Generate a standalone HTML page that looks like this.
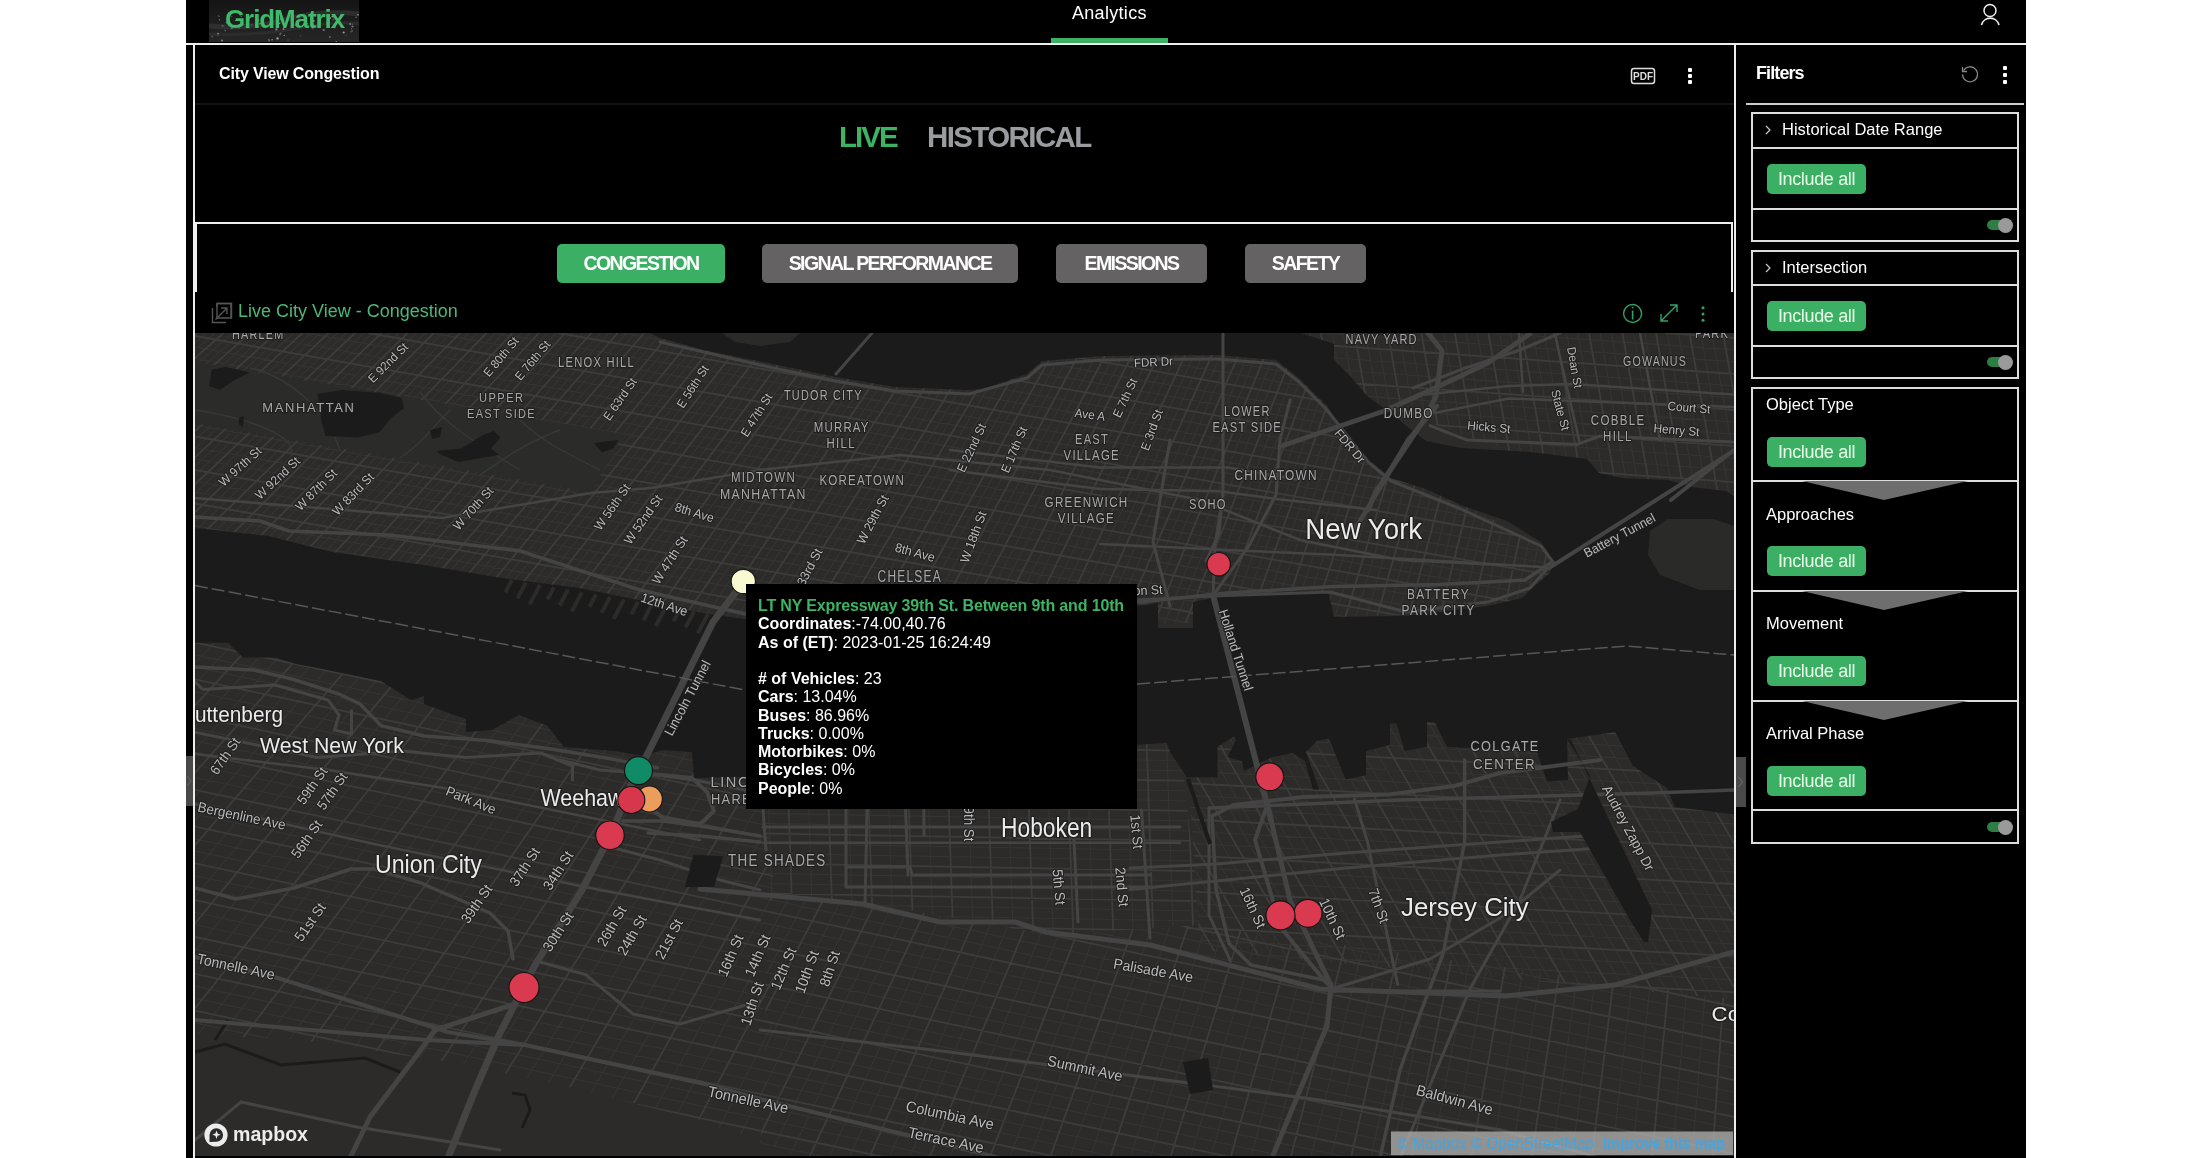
<!DOCTYPE html>
<html><head><meta charset="utf-8">
<style>
*{margin:0;padding:0;box-sizing:border-box}
html,body{width:2212px;height:1158px;overflow:hidden;background:#fff;font-family:"Liberation Sans",sans-serif}
body>*{will-change:transform}
.a{position:absolute}
#app{position:absolute;left:186px;top:0;width:1840px;height:1158px;background:#000;overflow:hidden}
.t{position:absolute;white-space:nowrap;line-height:1}
.btn{position:absolute;top:244px;height:39px;border-radius:5px;background:#646262;color:#fff;font-weight:bold;font-size:19.5px;letter-spacing:-1.6px;display:flex;align-items:center;justify-content:center}
.box{position:absolute;left:1751px;width:268px;border:2px solid #ddd}
.inc{position:absolute;left:1767px;width:99px;height:30px;background:#3bb065;border-radius:5px;color:#e9ffe9;font-size:18px;letter-spacing:-0.35px;display:flex;align-items:center;justify-content:center}
.hl{position:absolute;left:1751px;width:268px;height:2px;background:#ddd}
.tog{position:absolute;left:1987px;width:24px;height:10px;border-radius:5px;background:#2e7d45}
.knob{position:absolute;width:15px;height:15px;border-radius:50%;background:#9a9a9a}
</style></head><body>
<div id="app"></div>
<!-- header -->
<svg class="a" style="left:209px;top:0" width="150" height="42" viewBox="0 0 150 42"><defs><linearGradient id="lg" x1="0" y1="0" x2="0" y2="1"><stop offset="0" stop-color="#141414"/><stop offset="0.5" stop-color="#1e1e1e"/><stop offset="1" stop-color="#262626"/></linearGradient></defs><rect width="150" height="42" fill="url(#lg)"/><path d="M0 26 Q40 30 75 20 T150 14" stroke="#3a3a3a" stroke-width="5" fill="none" opacity="0.6"/><path d="M0 34 Q50 36 90 28 T150 24" stroke="#333" stroke-width="3" fill="none" opacity="0.6"/><circle cx="48.6" cy="18.2" r="0.9" fill="#555"/><circle cx="123.2" cy="16.6" r="0.9" fill="#999"/><circle cx="32.2" cy="16.4" r="0.7" fill="#666"/><circle cx="13.6" cy="25.9" r="1.1" fill="#555"/><circle cx="142.1" cy="31.7" r="0.9" fill="#555"/><circle cx="86.6" cy="25.1" r="1.2" fill="#555"/><circle cx="83.5" cy="17.7" r="0.7" fill="#999"/><circle cx="17.7" cy="22.6" r="1.1" fill="#666"/><circle cx="15.5" cy="30.0" r="0.6" fill="#555"/><circle cx="82.2" cy="15.8" r="0.4" fill="#666"/><circle cx="74.5" cy="28.9" r="1.0" fill="#888"/><circle cx="87.8" cy="26.7" r="0.6" fill="#666"/><circle cx="104.8" cy="20.8" r="0.9" fill="#999"/><circle cx="74.3" cy="23.6" r="0.8" fill="#999"/><circle cx="147.0" cy="17.3" r="0.7" fill="#777"/><circle cx="22.8" cy="27.7" r="0.4" fill="#555"/><circle cx="114.7" cy="30.0" r="1.1" fill="#777"/><circle cx="51.0" cy="23.8" r="0.8" fill="#888"/><circle cx="10.3" cy="16.6" r="0.6" fill="#555"/><circle cx="9.1" cy="33.6" r="0.9" fill="#888"/><circle cx="42.7" cy="24.8" r="0.9" fill="#555"/><circle cx="141.1" cy="24.0" r="0.9" fill="#888"/><circle cx="8.8" cy="35.5" r="0.5" fill="#666"/><circle cx="59.7" cy="39.7" r="0.8" fill="#666"/><circle cx="67.4" cy="29.4" r="1.1" fill="#888"/><circle cx="129.6" cy="21.8" r="0.7" fill="#777"/><circle cx="102.4" cy="24.7" r="0.6" fill="#555"/><circle cx="26.4" cy="20.5" r="0.6" fill="#888"/><circle cx="124.7" cy="19.1" r="0.6" fill="#666"/><circle cx="62.8" cy="24.3" r="0.9" fill="#666"/><circle cx="103.6" cy="28.4" r="0.9" fill="#555"/><circle cx="68.5" cy="38.4" r="1.2" fill="#999"/><circle cx="58.9" cy="25.2" r="0.5" fill="#888"/><circle cx="9.3" cy="15.9" r="0.6" fill="#666"/><circle cx="16.5" cy="30.8" r="0.5" fill="#999"/><circle cx="22.7" cy="16.8" r="0.7" fill="#555"/><circle cx="10.5" cy="19.8" r="0.7" fill="#777"/><circle cx="143.3" cy="30.9" r="0.8" fill="#555"/><circle cx="127.3" cy="41.8" r="0.8" fill="#888"/><circle cx="46.8" cy="18.0" r="1.0" fill="#777"/><circle cx="71.8" cy="33.4" r="0.8" fill="#666"/><circle cx="142.6" cy="28.8" r="0.5" fill="#999"/><circle cx="137.1" cy="35.2" r="0.6" fill="#555"/><circle cx="104.4" cy="21.3" r="0.7" fill="#666"/><circle cx="53.4" cy="20.2" r="0.8" fill="#999"/><circle cx="49.4" cy="20.2" r="1.0" fill="#666"/><circle cx="120.9" cy="36.9" r="1.0" fill="#666"/><circle cx="30.0" cy="27.8" r="1.0" fill="#555"/><circle cx="118.5" cy="27.2" r="0.6" fill="#999"/><circle cx="143.5" cy="26.5" r="1.1" fill="#777"/><circle cx="143.3" cy="24.2" r="0.6" fill="#666"/><circle cx="70.5" cy="23.5" r="0.8" fill="#999"/><circle cx="126.1" cy="27.4" r="0.9" fill="#555"/><circle cx="125.2" cy="17.4" r="0.7" fill="#666"/><circle cx="71.7" cy="19.0" r="1.0" fill="#777"/><circle cx="13.0" cy="40.5" r="1.0" fill="#888"/><circle cx="60.2" cy="40.5" r="1.0" fill="#666"/><circle cx="149.0" cy="14.8" r="0.9" fill="#888"/><circle cx="121.0" cy="18.1" r="1.1" fill="#888"/><circle cx="98.6" cy="23.8" r="0.8" fill="#666"/><circle cx="3.2" cy="36.4" r="1.0" fill="#555"/><circle cx="79.0" cy="40.1" r="0.7" fill="#666"/><circle cx="123.9" cy="19.9" r="0.6" fill="#777"/><circle cx="75.2" cy="35.4" r="0.7" fill="#999"/><circle cx="62.9" cy="17.7" r="1.1" fill="#777"/><circle cx="134.7" cy="32.5" r="1.1" fill="#999"/><circle cx="63.1" cy="39.7" r="0.8" fill="#999"/><circle cx="22.8" cy="28.3" r="1.1" fill="#666"/><circle cx="91.3" cy="35.7" r="0.5" fill="#666"/><circle cx="71.0" cy="34.3" r="0.8" fill="#777"/></svg>
<div class="t" style="left:225px;top:5.5px;font-size:26px;color:#3dba6a;font-weight:bold;letter-spacing:-1.1px">GridMatrix</div>
<div class="t" style="left:1072px;top:4px;font-size:18px;color:#fff;letter-spacing:0.3px">Analytics</div>
<div class="a" style="left:1051px;top:38px;width:117px;height:5px;background:#3cb064"></div>
<div class="a" style="left:186px;top:43px;width:1840px;height:2px;background:#eee"></div>
<svg class="a" style="left:1978px;top:2px" width="26" height="26" viewBox="0 0 26 26"><circle cx="12" cy="8.5" r="6" fill="none" stroke="#eee" stroke-width="1.5"/><path d="M3.5 23 A9 9 0 0 1 21 23" fill="none" stroke="#eee" stroke-width="1.6"/></svg>

<!-- main panel borders -->
<div class="a" style="left:193px;top:44px;width:2px;height:1114px;background:#eee"></div>
<div class="a" style="left:1734px;top:44px;width:2px;height:1114px;background:#eee"></div>
<div class="t" style="left:219px;top:66px;font-size:16px;color:#fff;font-weight:bold;letter-spacing:-0.15px">City View Congestion</div>
<svg class="a" style="left:1630px;top:67px" width="27" height="18" viewBox="0 0 27 18"><rect x="1.5" y="1.5" width="23" height="15" rx="2.5" fill="none" stroke="#ddd" stroke-width="1.5"/><text x="13" y="13.3" font-family="Liberation Sans" font-size="10" font-weight="bold" fill="#ddd" text-anchor="middle">PDF</text></svg>
<div class="a" style="left:1688px;top:68px;width:4px;height:4px;background:#fff;border-radius:1px"></div>
<div class="a" style="left:1688px;top:74px;width:4px;height:4px;background:#fff;border-radius:1px"></div>
<div class="a" style="left:1688px;top:80px;width:4px;height:4px;background:#fff;border-radius:1px"></div>
<div class="a" style="left:195px;top:103px;width:1539px;height:2px;background:#121212"></div>
<div class="t" style="left:839px;top:122px;font-size:29.5px;color:#3cb464;font-weight:bold;letter-spacing:-2px">LIVE</div>
<div class="t" style="left:927px;top:122px;font-size:29.5px;color:#9a9ca0;font-weight:bold;letter-spacing:-1.6px">HISTORICAL</div>
<div class="a" style="left:195px;top:222px;width:1538px;height:2px;background:#eee"></div>
<div class="a" style="left:195px;top:222px;width:2px;height:70px;background:#eee"></div>
<div class="a" style="left:1731px;top:222px;width:2px;height:70px;background:#eee"></div>

<div class="btn" style="left:557px;width:168px;background:#3bb065">CONGESTION</div>
<div class="btn" style="left:762px;width:256px">SIGNAL PERFORMANCE</div>
<div class="btn" style="left:1056px;width:151px">EMISSIONS</div>
<div class="btn" style="left:1245px;width:121px">SAFETY</div>

<svg class="a" style="left:211px;top:302px" width="22" height="22" viewBox="0 0 22 22"><path d="M6 1.5 H20 V15 M6 1.5 V5" fill="none" stroke="#555" stroke-width="1.4"/><path d="M1.5 6 V20.5 H15" fill="none" stroke="#555" stroke-width="1.4"/><path d="M6 1.5 H20.5 V16 H6 Z" fill="none" stroke="#555" stroke-width="1.4"/><path d="M4.5 17.5 L16 6 M10 6 H16 V12" fill="none" stroke="#555" stroke-width="1.4"/></svg>
<div class="t" style="left:238px;top:302px;font-size:18px;color:#4cb87a">Live City View - Congestion</div>

<svg class="a" style="left:1615px;top:296px" width="100" height="36" viewBox="1615 296 100 36">
<circle cx="1632.6" cy="313.5" r="9" fill="none" stroke="#34a266" stroke-width="1.4"/>
<path d="M1632.6 310.5 V319.5" stroke="#34a266" stroke-width="1.6"/><circle cx="1632.6" cy="307.6" r="0.9" fill="#34a266"/>
<path d="M1661 321 L1677 305 M1670 305 H1677 V312 M1661 314 V321 H1668" stroke="#34a266" stroke-width="1.4" fill="none"/>
<circle cx="1703" cy="307.8" r="1.5" fill="#34a266"/><circle cx="1703" cy="314" r="1.5" fill="#34a266"/><circle cx="1703" cy="320.3" r="1.5" fill="#34a266"/>
</svg>
<!-- MAP -->
<svg class="a" style="left:195px;top:333px;will-change:transform" width="1539" height="825" viewBox="195 333 1539 825"><defs><clipPath id="c_manh"><path d="M195,333 L1292,333 L1340,427 L1560,560 L1520,610 L1137,625 L745,625 L195,600 Z"/></clipPath><clipPath id="c_bk"><path d="M1292,333 L1740,333 L1740,520 L1560,470 L1340,390 Z"/></clipPath><clipPath id="c_njw"><path d="M195,600 L745,630 L760,760 L780,940 L760,1158 L195,1158 Z"/></clipPath><clipPath id="c_hob"><path d="M745,630 L1180,740 L1200,925 L1050,935 L880,905 L770,895 Z"/></clipPath><clipPath id="c_jc"><path d="M1180,650 L1740,650 L1740,1000 L1200,950 Z"/></clipPath><clipPath id="c_njs"><path d="M770,895 L880,905 L1050,935 L1200,925 L1740,1000 L1740,1158 L760,1158 Z"/></clipPath></defs><rect x="195" y="333" width="1539" height="825" fill="#2c2b2a"/>
<g clip-path="url(#c_manh)"><path d="M1635.2,333.0L1734.0,350.4M1571.8,333.0L1734.0,361.6M1445.1,333.0L1734.0,383.9M1381.8,333.0L1734.0,395.1M1255.1,333.0L1734.0,417.4M1191.7,333.0L1734.0,428.6M1065.0,333.0L1734.0,451.0M1001.7,333.0L1734.0,462.1M875.0,333.0L1734.0,484.5M811.6,333.0L1734.0,495.6M685.0,333.0L1734.0,518.0M621.6,333.0L1734.0,529.1M494.9,333.0L1734.0,551.5M431.6,333.0L1734.0,562.7M304.9,333.0L1734.0,585.0M241.5,333.0L1734.0,596.2M195.0,347.1L1734.0,618.5M195.0,358.3L1734.0,629.7M195.0,380.6L1734.0,652.0M195.0,391.8L1734.0,663.2M195.0,414.2L1734.0,685.5M195.0,425.3L1734.0,696.7M195.0,447.7L1734.0,719.0M195.0,458.8L1734.0,730.2M195.0,481.2L1734.0,752.5M195.0,492.3L1734.0,763.7M195.0,514.7L1734.0,786.0M195.0,525.9L1734.0,797.2M195.0,548.2L1734.0,819.6M195.0,559.4L1734.0,830.7M195.0,581.7L1734.0,853.1M195.0,592.9L1734.0,864.2M195.0,615.2L1734.0,886.6M195.0,626.4L1734.0,897.7M195.0,648.7L1734.0,920.1M195.0,659.9L1734.0,931.3M195.0,682.2L1734.0,953.6M195.0,693.4L1734.0,964.8M195.0,715.7L1734.0,987.1M195.0,726.9L1734.0,998.3M195.0,749.2L1734.0,1020.6M195.0,760.4L1734.0,1031.8M195.0,782.8L1734.0,1054.1M195.0,793.9L1734.0,1065.3M195.0,816.3L1734.0,1087.6M195.0,827.4L1734.0,1098.8M195.0,849.8L1734.0,1121.1M195.0,860.9L1734.0,1132.3M195.0,883.3L1734.0,1154.6M195.0,894.5L1689.7,1158.0M195.0,916.8L1563.0,1158.0M195.0,928.0L1499.6,1158.0M195.0,950.3L1372.9,1158.0M195.0,961.5L1309.6,1158.0M195.0,983.8L1182.9,1158.0M195.0,995.0L1119.5,1158.0M195.0,1017.3L992.9,1158.0M195.0,1028.5L929.5,1158.0M195.0,1050.8L802.8,1158.0M195.0,1062.0L739.5,1158.0M195.0,1084.3L612.8,1158.0M195.0,1095.5L549.4,1158.0M195.0,1117.8L422.7,1158.0M195.0,1129.0L359.4,1158.0M195.0,1151.4L232.7,1158.0M206.2,333.0L195.0,342.6M214.9,333.0L195.0,350.2M232.4,333.0L195.0,365.8M241.2,333.0L195.0,373.6M258.7,333.0L195.0,389.6M267.5,333.0L195.0,397.8M285.0,333.0L195.0,414.3M293.7,333.0L195.0,422.7M311.2,333.0L195.0,439.8M320.0,333.0L195.0,448.5M337.5,333.0L195.0,466.2M346.3,333.0L195.0,475.2M363.8,333.0L195.0,493.6M372.5,333.0L195.0,502.9M390.0,333.0L195.0,521.8M398.8,333.0L195.0,531.5M416.3,333.0L195.0,551.2M425.1,333.0L195.0,561.2M442.6,333.0L195.0,581.5M451.3,333.0L195.0,591.9M468.8,333.0L195.0,613.1M477.6,333.0L195.0,623.8M495.1,333.0L195.0,645.8M503.9,333.0L195.0,657.0M521.4,333.0L195.0,679.8M530.1,333.0L195.0,691.4M547.6,333.0L195.0,715.2M556.4,333.0L195.0,727.3M573.9,333.0L195.0,752.0M582.7,333.0L195.0,764.6M600.2,333.0L195.0,790.3M608.9,333.0L195.0,803.4M626.4,333.0L195.0,830.2M635.2,333.0L195.0,843.9M652.7,333.0L195.0,871.9M661.5,333.0L195.0,886.2M679.0,333.0L195.0,915.4M687.7,333.0L195.0,930.3M705.3,333.0L195.0,960.9M714.0,333.0L195.0,976.5M731.5,333.0L195.0,1008.4M740.3,333.0L195.0,1024.8M757.8,333.0L195.0,1058.3M766.5,333.0L195.0,1075.4M784.1,333.0L195.0,1110.5M792.8,333.0L195.0,1128.5M810.3,333.0L200.4,1158.0M819.1,333.0L214.2,1158.0M836.6,333.0L241.8,1158.0M845.3,333.0L255.6,1158.0M862.9,333.0L283.2,1158.0M871.6,333.0L297.0,1158.0M889.1,333.0L324.6,1158.0M897.9,333.0L338.4,1158.0M915.4,333.0L366.0,1158.0M924.2,333.0L379.8,1158.0M941.7,333.0L407.4,1158.0M950.4,333.0L421.2,1158.0M967.9,333.0L448.8,1158.0M976.7,333.0L462.6,1158.0M994.2,333.0L490.2,1158.0M1003.0,333.0L504.0,1158.0M1020.5,333.0L531.6,1158.0M1029.2,333.0L545.4,1158.0M1046.7,333.0L573.0,1158.0M1055.5,333.0L586.8,1158.0M1073.0,333.0L614.4,1158.0M1081.8,333.0L628.2,1158.0M1099.3,333.0L655.8,1158.0M1108.0,333.0L669.6,1158.0M1125.5,333.0L697.2,1158.0M1134.3,333.0L711.0,1158.0M1151.8,333.0L738.6,1158.0M1160.6,333.0L752.4,1158.0M1178.1,333.0L780.0,1158.0M1186.8,333.0L793.8,1158.0M1204.3,333.0L821.4,1158.0M1213.1,333.0L835.2,1158.0M1230.6,333.0L862.8,1158.0M1239.4,333.0L876.6,1158.0M1256.9,333.0L904.2,1158.0M1265.6,333.0L918.0,1158.0M1283.1,333.0L945.6,1158.0M1291.9,333.0L959.4,1158.0M1309.4,333.0L987.0,1158.0M1318.2,333.0L1000.8,1158.0M1335.7,333.0L1028.4,1158.0M1344.4,333.0L1042.2,1158.0M1361.9,333.0L1069.8,1158.0M1370.7,333.0L1083.6,1158.0M1388.2,333.0L1111.2,1158.0M1397.0,333.0L1125.0,1158.0M1414.5,333.0L1152.6,1158.0M1423.2,333.0L1166.4,1158.0M1440.8,333.0L1194.0,1158.0M1449.5,333.0L1207.8,1158.0M1467.0,333.0L1235.4,1158.0M1475.8,333.0L1249.2,1158.0M1493.3,333.0L1276.8,1158.0M1502.0,333.0L1290.6,1158.0M1519.6,333.0L1318.2,1158.0M1528.3,333.0L1332.0,1158.0M1545.8,333.0L1359.6,1158.0M1554.6,333.0L1373.4,1158.0M1572.1,333.0L1401.0,1158.0M1580.8,333.0L1414.8,1158.0M1598.4,333.0L1442.4,1158.0M1607.1,333.0L1456.2,1158.0M1624.6,333.0L1483.8,1158.0M1633.4,333.0L1497.6,1158.0M1650.9,333.0L1525.2,1158.0M1659.7,333.0L1539.0,1158.0M1677.2,333.0L1566.6,1158.0M1685.9,333.0L1580.4,1158.0M1703.4,333.0L1608.0,1158.0M1712.2,333.0L1621.8,1158.0M1729.7,333.0L1649.4,1158.0M1734.0,381.9L1663.2,1158.0M1734.0,611.3L1690.8,1158.0M1734.0,754.9L1704.6,1158.0M1734.0,1129.1L1732.3,1158.0" stroke="#353433" stroke-width="1.1" fill="none"/><path d="M1698.5,333.0L1734.0,339.3M1508.5,333.0L1734.0,372.8M1318.4,333.0L1734.0,406.3M1128.4,333.0L1734.0,439.8M938.3,333.0L1734.0,473.3M748.3,333.0L1734.0,506.8M558.3,333.0L1734.0,540.3M368.2,333.0L1734.0,573.8M195.0,336.0L1734.0,607.3M195.0,369.5L1734.0,640.8M195.0,403.0L1734.0,674.4M195.0,436.5L1734.0,707.9M195.0,470.0L1734.0,741.4M195.0,503.5L1734.0,774.9M195.0,537.0L1734.0,808.4M195.0,570.5L1734.0,841.9M195.0,604.0L1734.0,875.4M195.0,637.5L1734.0,908.9M195.0,671.1L1734.0,942.4M195.0,704.6L1734.0,975.9M195.0,738.1L1734.0,1009.4M195.0,771.6L1734.0,1043.0M195.0,805.1L1734.0,1076.5M195.0,838.6L1734.0,1110.0M195.0,872.1L1734.0,1143.5M195.0,905.6L1626.3,1158.0M195.0,939.1L1436.3,1158.0M195.0,972.6L1246.2,1158.0M195.0,1006.1L1056.2,1158.0M195.0,1039.7L866.2,1158.0M195.0,1073.2L676.1,1158.0M195.0,1106.7L486.1,1158.0M195.0,1140.2L296.0,1158.0M197.4,333.0L195.0,335.1M223.7,333.0L195.0,358.0M249.9,333.0L195.0,381.6M276.2,333.0L195.0,406.0M302.5,333.0L195.0,431.2M328.7,333.0L195.0,457.3M355.0,333.0L195.0,484.3M381.3,333.0L195.0,512.3M407.5,333.0L195.0,541.3M433.8,333.0L195.0,571.3M460.1,333.0L195.0,602.4M486.4,333.0L195.0,634.8M512.6,333.0L195.0,668.3M538.9,333.0L195.0,703.2M565.2,333.0L195.0,739.5M591.4,333.0L195.0,777.3M617.7,333.0L195.0,816.7M644.0,333.0L195.0,857.8M670.2,333.0L195.0,900.7M696.5,333.0L195.0,945.5M722.8,333.0L195.0,992.3M749.0,333.0L195.0,1041.4M775.3,333.0L195.0,1092.8M801.6,333.0L195.0,1146.7M827.8,333.0L228.0,1158.0M854.1,333.0L269.4,1158.0M880.4,333.0L310.8,1158.0M906.6,333.0L352.2,1158.0M932.9,333.0L393.6,1158.0M959.2,333.0L435.0,1158.0M985.4,333.0L476.4,1158.0M1011.7,333.0L517.8,1158.0M1038.0,333.0L559.2,1158.0M1064.2,333.0L600.6,1158.0M1090.5,333.0L642.0,1158.0M1116.8,333.0L683.4,1158.0M1143.1,333.0L724.8,1158.0M1169.3,333.0L766.2,1158.0M1195.6,333.0L807.6,1158.0M1221.9,333.0L849.0,1158.0M1248.1,333.0L890.4,1158.0M1274.4,333.0L931.8,1158.0M1300.7,333.0L973.2,1158.0M1326.9,333.0L1014.6,1158.0M1353.2,333.0L1056.0,1158.0M1379.5,333.0L1097.4,1158.0M1405.7,333.0L1138.8,1158.0M1432.0,333.0L1180.2,1158.0M1458.3,333.0L1221.6,1158.0M1484.5,333.0L1263.0,1158.0M1510.8,333.0L1304.4,1158.0M1537.1,333.0L1345.8,1158.0M1563.3,333.0L1387.2,1158.0M1589.6,333.0L1428.6,1158.0M1615.9,333.0L1470.0,1158.0M1642.1,333.0L1511.4,1158.0M1668.4,333.0L1552.8,1158.0M1694.7,333.0L1594.2,1158.0M1720.9,333.0L1635.6,1158.0M1734.0,488.4L1677.0,1158.0M1734.0,924.9L1718.4,1158.0" stroke="#3c3c3b" stroke-width="1.8" fill="none"/></g>
<g clip-path="url(#c_bk)"><path d="M1493.6,333.0L1734.0,349.8M1321.6,333.0L1734.0,361.8M977.5,333.0L1734.0,385.9M805.5,333.0L1734.0,397.9M461.4,333.0L1734.0,422.0M289.4,333.0L1734.0,434.0M195.0,350.5L1734.0,458.1M195.0,362.5L1734.0,470.1M195.0,386.5L1734.0,494.2M195.0,398.6L1734.0,506.2M195.0,422.6L1734.0,530.2M195.0,434.7L1734.0,542.3M195.0,458.7L1734.0,566.3M195.0,470.7L1734.0,578.4M195.0,494.8L1734.0,602.4M195.0,506.8L1734.0,614.5M195.0,530.9L1734.0,638.5M195.0,542.9L1734.0,650.5M195.0,567.0L1734.0,674.6M195.0,579.0L1734.0,686.6M195.0,603.1L1734.0,710.7M195.0,615.1L1734.0,722.7M195.0,639.2L1734.0,746.8M195.0,651.2L1734.0,758.8M195.0,675.2L1734.0,782.9M195.0,687.3L1734.0,794.9M195.0,711.3L1734.0,819.0M195.0,723.4L1734.0,831.0M195.0,747.4L1734.0,855.0M195.0,759.5L1734.0,867.1M195.0,783.5L1734.0,891.1M195.0,795.5L1734.0,903.2M195.0,819.6L1734.0,927.2M195.0,831.6L1734.0,939.2M195.0,855.7L1734.0,963.3M195.0,867.7L1734.0,975.3M195.0,891.8L1734.0,999.4M195.0,903.8L1734.0,1011.4M195.0,927.9L1734.0,1035.5M195.0,939.9L1734.0,1047.5M195.0,964.0L1734.0,1071.6M195.0,976.0L1734.0,1083.6M195.0,1000.0L1734.0,1107.7M195.0,1012.1L1734.0,1119.7M195.0,1036.1L1734.0,1143.7M195.0,1048.2L1734.0,1155.8M195.0,1072.2L1421.8,1158.0M195.0,1084.2L1249.8,1158.0M195.0,1108.3L905.7,1158.0M195.0,1120.3L733.7,1158.0M195.0,1144.4L389.6,1158.0M195.0,1156.4L217.6,1158.0M1711.8,333.0L1734.0,458.7M1700.7,333.0L1734.0,522.1M1678.3,333.0L1734.0,648.8M1667.2,333.0L1734.0,712.1M1644.8,333.0L1734.0,838.8M1633.6,333.0L1734.0,902.1M1611.3,333.0L1734.0,1028.8M1600.1,333.0L1734.0,1092.2M1577.8,333.0L1723.3,1158.0M1566.6,333.0L1712.1,1158.0M1544.3,333.0L1689.8,1158.0M1533.1,333.0L1678.6,1158.0M1510.8,333.0L1656.2,1158.0M1499.6,333.0L1645.1,1158.0M1477.3,333.0L1622.7,1158.0M1466.1,333.0L1611.6,1158.0M1443.8,333.0L1589.2,1158.0M1432.6,333.0L1578.1,1158.0M1410.2,333.0L1555.7,1158.0M1399.1,333.0L1544.5,1158.0M1376.7,333.0L1522.2,1158.0M1365.6,333.0L1511.0,1158.0M1343.2,333.0L1488.7,1158.0M1332.1,333.0L1477.5,1158.0M1309.7,333.0L1455.2,1158.0M1298.6,333.0L1444.0,1158.0M1276.2,333.0L1421.7,1158.0M1265.0,333.0L1410.5,1158.0M1242.7,333.0L1388.2,1158.0M1231.5,333.0L1377.0,1158.0M1209.2,333.0L1354.7,1158.0M1198.0,333.0L1343.5,1158.0M1175.7,333.0L1321.2,1158.0M1164.5,333.0L1310.0,1158.0M1142.2,333.0L1287.6,1158.0M1131.0,333.0L1276.5,1158.0M1108.7,333.0L1254.1,1158.0M1097.5,333.0L1243.0,1158.0M1075.2,333.0L1220.6,1158.0M1064.0,333.0L1209.5,1158.0M1041.6,333.0L1187.1,1158.0M1030.5,333.0L1175.9,1158.0M1008.1,333.0L1153.6,1158.0M997.0,333.0L1142.4,1158.0M974.6,333.0L1120.1,1158.0M963.5,333.0L1108.9,1158.0M941.1,333.0L1086.6,1158.0M930.0,333.0L1075.4,1158.0M907.6,333.0L1053.1,1158.0M896.4,333.0L1041.9,1158.0M874.1,333.0L1019.6,1158.0M862.9,333.0L1008.4,1158.0M840.6,333.0L986.1,1158.0M829.4,333.0L974.9,1158.0M807.1,333.0L952.6,1158.0M795.9,333.0L941.4,1158.0M773.6,333.0L919.0,1158.0M762.4,333.0L907.9,1158.0M740.1,333.0L885.5,1158.0M728.9,333.0L874.4,1158.0M706.6,333.0L852.0,1158.0M695.4,333.0L840.9,1158.0M673.0,333.0L818.5,1158.0M661.9,333.0L807.4,1158.0M639.5,333.0L785.0,1158.0M628.4,333.0L773.8,1158.0M606.0,333.0L751.5,1158.0M594.9,333.0L740.3,1158.0M572.5,333.0L718.0,1158.0M561.4,333.0L706.8,1158.0M539.0,333.0L684.5,1158.0M527.8,333.0L673.3,1158.0M505.5,333.0L651.0,1158.0M494.3,333.0L639.8,1158.0M472.0,333.0L617.5,1158.0M460.8,333.0L606.3,1158.0M438.5,333.0L584.0,1158.0M427.3,333.0L572.8,1158.0M405.0,333.0L550.4,1158.0M393.8,333.0L539.3,1158.0M371.5,333.0L516.9,1158.0M360.3,333.0L505.8,1158.0M338.0,333.0L483.4,1158.0M326.8,333.0L472.3,1158.0M304.5,333.0L449.9,1158.0M293.3,333.0L438.8,1158.0M270.9,333.0L416.4,1158.0M259.8,333.0L405.2,1158.0M237.4,333.0L382.9,1158.0M226.3,333.0L371.7,1158.0M203.9,333.0L349.4,1158.0M195.0,345.7L338.2,1158.0M195.0,472.4L315.9,1158.0M195.0,535.8L304.7,1158.0M195.0,662.5L282.4,1158.0M195.0,725.8L271.2,1158.0M195.0,852.5L248.9,1158.0M195.0,915.9L237.7,1158.0M195.0,1042.6L215.4,1158.0M195.0,1105.9L204.2,1158.0" stroke="#353433" stroke-width="1.1" fill="none"/><path d="M1665.6,333.0L1734.0,337.8M1149.6,333.0L1734.0,373.9M633.5,333.0L1734.0,410.0M195.0,338.4L1734.0,446.0M195.0,374.5L1734.0,482.1M195.0,410.6L1734.0,518.2M195.0,446.7L1734.0,554.3M195.0,482.8L1734.0,590.4M195.0,518.9L1734.0,626.5M195.0,555.0L1734.0,662.6M195.0,591.0L1734.0,698.7M195.0,627.1L1734.0,734.7M195.0,663.2L1734.0,770.8M195.0,699.3L1734.0,806.9M195.0,735.4L1734.0,843.0M195.0,771.5L1734.0,879.1M195.0,807.6L1734.0,915.2M195.0,843.7L1734.0,951.3M195.0,879.7L1734.0,987.4M195.0,915.8L1734.0,1023.5M195.0,951.9L1734.0,1059.5M195.0,988.0L1734.0,1095.6M195.0,1024.1L1734.0,1131.7M195.0,1060.2L1593.8,1158.0M195.0,1096.3L1077.7,1158.0M195.0,1132.4L561.7,1158.0M1723.0,333.0L1734.0,395.4M1689.5,333.0L1734.0,585.4M1656.0,333.0L1734.0,775.5M1622.5,333.0L1734.0,965.5M1589.0,333.0L1734.0,1155.5M1555.5,333.0L1700.9,1158.0M1521.9,333.0L1667.4,1158.0M1488.4,333.0L1633.9,1158.0M1454.9,333.0L1600.4,1158.0M1421.4,333.0L1566.9,1158.0M1387.9,333.0L1533.4,1158.0M1354.4,333.0L1499.9,1158.0M1320.9,333.0L1466.4,1158.0M1287.4,333.0L1432.9,1158.0M1253.9,333.0L1399.3,1158.0M1220.4,333.0L1365.8,1158.0M1186.9,333.0L1332.3,1158.0M1153.3,333.0L1298.8,1158.0M1119.8,333.0L1265.3,1158.0M1086.3,333.0L1231.8,1158.0M1052.8,333.0L1198.3,1158.0M1019.3,333.0L1164.8,1158.0M985.8,333.0L1131.3,1158.0M952.3,333.0L1097.8,1158.0M918.8,333.0L1064.3,1158.0M885.3,333.0L1030.7,1158.0M851.8,333.0L997.2,1158.0M818.3,333.0L963.7,1158.0M784.7,333.0L930.2,1158.0M751.2,333.0L896.7,1158.0M717.7,333.0L863.2,1158.0M684.2,333.0L829.7,1158.0M650.7,333.0L796.2,1158.0M617.2,333.0L762.7,1158.0M583.7,333.0L729.2,1158.0M550.2,333.0L695.7,1158.0M516.7,333.0L662.1,1158.0M483.2,333.0L628.6,1158.0M449.7,333.0L595.1,1158.0M416.1,333.0L561.6,1158.0M382.6,333.0L528.1,1158.0M349.1,333.0L494.6,1158.0M315.6,333.0L461.1,1158.0M282.1,333.0L427.6,1158.0M248.6,333.0L394.1,1158.0M215.1,333.0L360.6,1158.0M195.0,409.1L327.1,1158.0M195.0,599.1L293.5,1158.0M195.0,789.2L260.0,1158.0M195.0,979.2L226.5,1158.0" stroke="#3c3c3b" stroke-width="1.8" fill="none"/></g>
<g clip-path="url(#c_njw)"><path d="M1624.4,333.0L1734.0,356.3M1566.6,333.0L1734.0,368.6M1451.2,333.0L1734.0,393.1M1393.5,333.0L1734.0,405.4M1278.1,333.0L1734.0,429.9M1220.3,333.0L1734.0,442.2M1104.9,333.0L1734.0,466.7M1047.2,333.0L1734.0,479.0M931.8,333.0L1734.0,503.5M874.0,333.0L1734.0,515.8M758.6,333.0L1734.0,540.3M700.9,333.0L1734.0,552.6M585.5,333.0L1734.0,577.1M527.7,333.0L1734.0,589.4M412.3,333.0L1734.0,613.9M354.6,333.0L1734.0,626.2M239.2,333.0L1734.0,650.7M195.0,335.9L1734.0,663.0M195.0,360.4L1734.0,687.5M195.0,372.7L1734.0,699.8M195.0,397.2L1734.0,724.3M195.0,409.5L1734.0,736.6M195.0,434.0L1734.0,761.2M195.0,446.3L1734.0,773.4M195.0,470.8L1734.0,798.0M195.0,483.1L1734.0,810.2M195.0,507.6L1734.0,834.8M195.0,519.9L1734.0,847.0M195.0,544.4L1734.0,871.6M195.0,556.7L1734.0,883.8M195.0,581.2L1734.0,908.4M195.0,593.5L1734.0,920.6M195.0,618.0L1734.0,945.2M195.0,630.3L1734.0,957.4M195.0,654.9L1734.0,982.0M195.0,667.1L1734.0,994.2M195.0,691.7L1734.0,1018.8M195.0,703.9L1734.0,1031.0M195.0,728.5L1734.0,1055.6M195.0,740.7L1734.0,1067.9M195.0,765.3L1734.0,1092.4M195.0,777.5L1734.0,1104.7M195.0,802.1L1734.0,1129.2M195.0,814.3L1734.0,1141.5M195.0,838.9L1696.4,1158.0M195.0,851.1L1638.7,1158.0M195.0,875.7L1523.2,1158.0M195.0,887.9L1465.5,1158.0M195.0,912.5L1350.1,1158.0M195.0,924.8L1292.4,1158.0M195.0,949.3L1176.9,1158.0M195.0,961.6L1119.2,1158.0M195.0,986.1L1003.8,1158.0M195.0,998.4L946.1,1158.0M195.0,1022.9L830.6,1158.0M195.0,1035.2L772.9,1158.0M195.0,1059.7L657.5,1158.0M195.0,1072.0L599.7,1158.0M195.0,1096.5L484.3,1158.0M195.0,1108.8L426.6,1158.0M195.0,1133.3L311.2,1158.0M195.0,1145.6L253.4,1158.0M222.1,333.0L195.0,356.5M238.0,333.0L195.0,370.8M269.8,333.0L195.0,400.0M285.8,333.0L195.0,415.1M317.6,333.0L195.0,446.2M333.5,333.0L195.0,462.2M365.4,333.0L195.0,495.2M381.3,333.0L195.0,512.3M413.1,333.0L195.0,547.5M429.0,333.0L195.0,565.7M460.9,333.0L195.0,603.4M476.8,333.0L195.0,622.9M508.6,333.0L195.0,663.2M524.6,333.0L195.0,684.0M556.4,333.0L195.0,727.3M572.3,333.0L195.0,749.7M604.2,333.0L195.0,796.2M620.1,333.0L195.0,820.4M651.9,333.0L195.0,870.6M667.8,333.0L195.0,896.7M699.7,333.0L195.0,951.1M715.6,333.0L195.0,979.3M747.4,333.0L195.0,1038.3M763.4,333.0L195.0,1069.1M795.2,333.0L195.0,1133.4M811.1,333.0L201.7,1158.0M843.0,333.0L251.8,1158.0M858.9,333.0L276.9,1158.0M890.7,333.0L327.1,1158.0M906.6,333.0L352.2,1158.0M938.5,333.0L402.4,1158.0M954.4,333.0L427.5,1158.0M986.2,333.0L477.7,1158.0M1002.2,333.0L502.8,1158.0M1034.0,333.0L552.9,1158.0M1049.9,333.0L578.0,1158.0M1081.8,333.0L628.2,1158.0M1097.7,333.0L653.3,1158.0M1129.5,333.0L703.5,1158.0M1145.4,333.0L728.6,1158.0M1177.3,333.0L778.8,1158.0M1193.2,333.0L803.9,1158.0M1225.0,333.0L854.0,1158.0M1241.0,333.0L879.1,1158.0M1272.8,333.0L929.3,1158.0M1288.7,333.0L954.4,1158.0M1320.6,333.0L1004.6,1158.0M1336.5,333.0L1029.7,1158.0M1368.3,333.0L1079.9,1158.0M1384.2,333.0L1105.0,1158.0M1416.1,333.0L1155.1,1158.0M1432.0,333.0L1180.2,1158.0M1463.8,333.0L1230.4,1158.0M1479.8,333.0L1255.5,1158.0M1511.6,333.0L1305.7,1158.0M1527.5,333.0L1330.8,1158.0M1559.4,333.0L1381.0,1158.0M1575.3,333.0L1406.1,1158.0M1607.1,333.0L1456.2,1158.0M1623.0,333.0L1481.3,1158.0M1654.9,333.0L1531.5,1158.0M1670.8,333.0L1556.6,1158.0M1702.6,333.0L1606.8,1158.0M1718.6,333.0L1631.9,1158.0M1734.0,531.0L1682.1,1158.0M1734.0,783.7L1707.2,1158.0" stroke="#353433" stroke-width="1.1" fill="none"/><path d="M1682.1,333.0L1734.0,344.0M1508.9,333.0L1734.0,380.8M1335.8,333.0L1734.0,417.6M1162.6,333.0L1734.0,454.4M989.5,333.0L1734.0,491.3M816.3,333.0L1734.0,528.1M643.2,333.0L1734.0,564.9M470.0,333.0L1734.0,601.7M296.9,333.0L1734.0,638.5M195.0,348.2L1734.0,675.3M195.0,385.0L1734.0,712.1M195.0,421.8L1734.0,748.9M195.0,458.6L1734.0,785.7M195.0,495.4L1734.0,822.5M195.0,532.2L1734.0,859.3M195.0,569.0L1734.0,896.1M195.0,605.8L1734.0,932.9M195.0,642.6L1734.0,969.7M195.0,679.4L1734.0,1006.5M195.0,716.2L1734.0,1043.3M195.0,753.0L1734.0,1080.1M195.0,789.8L1734.0,1116.9M195.0,826.6L1734.0,1153.7M195.0,863.4L1580.9,1158.0M195.0,900.2L1407.8,1158.0M195.0,937.0L1234.6,1158.0M195.0,973.8L1061.5,1158.0M195.0,1010.6L888.3,1158.0M195.0,1047.4L715.2,1158.0M195.0,1084.2L542.0,1158.0M195.0,1121.0L368.9,1158.0M195.0,1157.8L195.7,1158.0M206.2,333.0L195.0,342.6M253.9,333.0L195.0,385.2M301.7,333.0L195.0,430.5M349.4,333.0L195.0,478.5M397.2,333.0L195.0,529.7M445.0,333.0L195.0,584.4M492.7,333.0L195.0,642.8M540.5,333.0L195.0,705.4M588.2,333.0L195.0,772.7M636.0,333.0L195.0,845.2M683.8,333.0L195.0,923.5M731.5,333.0L195.0,1008.4M779.3,333.0L195.0,1100.8M827.0,333.0L226.7,1158.0M874.8,333.0L302.0,1158.0M922.6,333.0L377.3,1158.0M970.3,333.0L452.6,1158.0M1018.1,333.0L527.8,1158.0M1065.8,333.0L603.1,1158.0M1113.6,333.0L678.4,1158.0M1161.4,333.0L753.7,1158.0M1209.1,333.0L828.9,1158.0M1256.9,333.0L904.2,1158.0M1304.6,333.0L979.5,1158.0M1352.4,333.0L1054.8,1158.0M1400.2,333.0L1130.0,1158.0M1447.9,333.0L1205.3,1158.0M1495.7,333.0L1280.6,1158.0M1543.4,333.0L1355.9,1158.0M1591.2,333.0L1431.1,1158.0M1639.0,333.0L1506.4,1158.0M1686.7,333.0L1581.7,1158.0M1734.0,338.1L1657.0,1158.0M1734.0,1129.1L1732.3,1158.0" stroke="#3c3c3b" stroke-width="1.8" fill="none"/></g>
<g clip-path="url(#c_hob)"><path d="M742.0,333.0L1734.0,350.3M195.0,333.5L1734.0,360.3M195.0,353.5L1734.0,380.3M195.0,363.5L1734.0,390.3M195.0,383.5L1734.0,410.3M195.0,393.5L1734.0,420.3M195.0,413.5L1734.0,440.3M195.0,423.5L1734.0,450.3M195.0,443.5L1734.0,470.3M195.0,453.5L1734.0,480.3M195.0,473.5L1734.0,500.3M195.0,483.5L1734.0,510.3M195.0,503.5L1734.0,530.3M195.0,513.5L1734.0,540.3M195.0,533.5L1734.0,560.3M195.0,543.5L1734.0,570.3M195.0,563.5L1734.0,590.4M195.0,573.5L1734.0,600.4M195.0,593.5L1734.0,620.4M195.0,603.5L1734.0,630.4M195.0,623.5L1734.0,650.4M195.0,633.5L1734.0,660.4M195.0,653.5L1734.0,680.4M195.0,663.5L1734.0,690.4M195.0,683.5L1734.0,710.4M195.0,693.5L1734.0,720.4M195.0,713.5L1734.0,740.4M195.0,723.5L1734.0,750.4M195.0,743.5L1734.0,770.4M195.0,753.5L1734.0,780.4M195.0,773.5L1734.0,800.4M195.0,783.5L1734.0,810.4M195.0,803.5L1734.0,830.4M195.0,813.5L1734.0,840.4M195.0,833.5L1734.0,860.4M195.0,843.5L1734.0,870.4M195.0,863.5L1734.0,890.4M195.0,873.5L1734.0,900.4M195.0,893.5L1734.0,920.4M195.0,903.5L1734.0,930.4M195.0,923.5L1734.0,950.4M195.0,933.5L1734.0,960.4M195.0,953.5L1734.0,980.4M195.0,963.5L1734.0,990.4M195.0,983.6L1734.0,1010.4M195.0,993.6L1734.0,1020.4M195.0,1013.6L1734.0,1040.4M195.0,1023.6L1734.0,1050.4M195.0,1043.6L1734.0,1070.4M195.0,1053.6L1734.0,1080.4M195.0,1073.6L1734.0,1100.4M195.0,1083.6L1734.0,1110.4M195.0,1103.6L1734.0,1130.4M195.0,1113.6L1734.0,1140.4M195.0,1133.6L1594.3,1158.0M195.0,1143.6L1021.3,1158.0M1712.7,333.0L1734.0,944.0M1672.6,333.0L1701.5,1158.0M1632.6,333.0L1661.4,1158.0M1592.6,333.0L1621.4,1158.0M1552.6,333.0L1581.4,1158.0M1512.5,333.0L1541.4,1158.0M1472.5,333.0L1501.3,1158.0M1432.5,333.0L1461.3,1158.0M1392.5,333.0L1421.3,1158.0M1352.4,333.0L1381.3,1158.0M1312.4,333.0L1341.2,1158.0M1272.4,333.0L1301.2,1158.0M1232.4,333.0L1261.2,1158.0M1192.3,333.0L1221.2,1158.0M1152.3,333.0L1181.1,1158.0M1112.3,333.0L1141.1,1158.0M1072.3,333.0L1101.1,1158.0M1032.3,333.0L1061.1,1158.0M992.2,333.0L1021.0,1158.0M952.2,333.0L981.0,1158.0M912.2,333.0L941.0,1158.0M872.2,333.0L901.0,1158.0M832.1,333.0L860.9,1158.0M792.1,333.0L820.9,1158.0M752.1,333.0L780.9,1158.0M712.1,333.0L740.9,1158.0M672.0,333.0L700.8,1158.0M632.0,333.0L660.8,1158.0M592.0,333.0L620.8,1158.0M552.0,333.0L580.8,1158.0M511.9,333.0L540.7,1158.0M471.9,333.0L500.7,1158.0M431.9,333.0L460.7,1158.0M391.9,333.0L420.7,1158.0M351.8,333.0L380.6,1158.0M311.8,333.0L340.6,1158.0M271.8,333.0L300.6,1158.0M231.8,333.0L260.6,1158.0M195.0,426.4L220.5,1158.0" stroke="#353433" stroke-width="1.1" fill="none"/><path d="M1315.0,333.0L1734.0,340.3M195.0,343.5L1734.0,370.3M195.0,373.5L1734.0,400.3M195.0,403.5L1734.0,430.3M195.0,433.5L1734.0,460.3M195.0,463.5L1734.0,490.3M195.0,493.5L1734.0,520.3M195.0,523.5L1734.0,550.3M195.0,553.5L1734.0,580.4M195.0,583.5L1734.0,610.4M195.0,613.5L1734.0,640.4M195.0,643.5L1734.0,670.4M195.0,673.5L1734.0,700.4M195.0,703.5L1734.0,730.4M195.0,733.5L1734.0,760.4M195.0,763.5L1734.0,790.4M195.0,793.5L1734.0,820.4M195.0,823.5L1734.0,850.4M195.0,853.5L1734.0,880.4M195.0,883.5L1734.0,910.4M195.0,913.5L1734.0,940.4M195.0,943.5L1734.0,970.4M195.0,973.6L1734.0,1000.4M195.0,1003.6L1734.0,1030.4M195.0,1033.6L1734.0,1060.4M195.0,1063.6L1734.0,1090.4M195.0,1093.6L1734.0,1120.4M195.0,1123.6L1734.0,1150.4M195.0,1153.6L448.3,1158.0M1732.7,333.0L1734.0,370.9M1692.7,333.0L1721.5,1158.0M1652.6,333.0L1681.4,1158.0M1612.6,333.0L1641.4,1158.0M1572.6,333.0L1601.4,1158.0M1532.6,333.0L1561.4,1158.0M1492.5,333.0L1521.3,1158.0M1452.5,333.0L1481.3,1158.0M1412.5,333.0L1441.3,1158.0M1372.5,333.0L1401.3,1158.0M1332.4,333.0L1361.2,1158.0M1292.4,333.0L1321.2,1158.0M1252.4,333.0L1281.2,1158.0M1212.4,333.0L1241.2,1158.0M1172.3,333.0L1201.1,1158.0M1132.3,333.0L1161.1,1158.0M1092.3,333.0L1121.1,1158.0M1052.3,333.0L1081.1,1158.0M1012.2,333.0L1041.0,1158.0M972.2,333.0L1001.0,1158.0M932.2,333.0L961.0,1158.0M892.2,333.0L921.0,1158.0M852.1,333.0L881.0,1158.0M812.1,333.0L840.9,1158.0M772.1,333.0L800.9,1158.0M732.1,333.0L760.9,1158.0M692.0,333.0L720.9,1158.0M652.0,333.0L680.8,1158.0M612.0,333.0L640.8,1158.0M572.0,333.0L600.8,1158.0M531.9,333.0L560.8,1158.0M491.9,333.0L520.7,1158.0M451.9,333.0L480.7,1158.0M411.9,333.0L440.7,1158.0M371.8,333.0L400.7,1158.0M331.8,333.0L360.6,1158.0M291.8,333.0L320.6,1158.0M251.8,333.0L280.6,1158.0M211.8,333.0L240.6,1158.0M195.0,999.5L200.5,1158.0" stroke="#3c3c3b" stroke-width="1.8" fill="none"/></g>
<g clip-path="url(#c_jc)"><path d="M1309.7,333.0L1734.0,355.2M1080.4,333.0L1734.0,367.3M621.8,333.0L1734.0,391.3M392.5,333.0L1734.0,403.3M195.0,346.7L1734.0,427.3M195.0,358.7L1734.0,439.4M195.0,382.7L1734.0,463.4M195.0,394.7L1734.0,475.4M195.0,418.8L1734.0,499.4M195.0,430.8L1734.0,511.5M195.0,454.8L1734.0,535.5M195.0,466.8L1734.0,547.5M195.0,490.9L1734.0,571.5M195.0,502.9L1734.0,583.6M195.0,526.9L1734.0,607.6M195.0,538.9L1734.0,619.6M195.0,563.0L1734.0,643.6M195.0,575.0L1734.0,655.6M195.0,599.0L1734.0,679.7M195.0,611.0L1734.0,691.7M195.0,635.1L1734.0,715.7M195.0,647.1L1734.0,727.7M195.0,671.1L1734.0,751.8M195.0,683.1L1734.0,763.8M195.0,707.2L1734.0,787.8M195.0,719.2L1734.0,799.8M195.0,743.2L1734.0,823.9M195.0,755.2L1734.0,835.9M195.0,779.3L1734.0,859.9M195.0,791.3L1734.0,871.9M195.0,815.3L1734.0,896.0M195.0,827.3L1734.0,908.0M195.0,851.4L1734.0,932.0M195.0,863.4L1734.0,944.0M195.0,887.4L1734.0,968.1M195.0,899.4L1734.0,980.1M195.0,923.5L1734.0,1004.1M195.0,935.5L1734.0,1016.1M195.0,959.5L1734.0,1040.2M195.0,971.5L1734.0,1052.2M195.0,995.6L1734.0,1076.2M195.0,1007.6L1734.0,1088.2M195.0,1031.6L1734.0,1112.3M195.0,1043.6L1734.0,1124.3M195.0,1067.7L1734.0,1148.3M195.0,1079.7L1689.3,1158.0M195.0,1103.7L1230.8,1158.0M195.0,1115.7L1001.5,1158.0M195.0,1139.8L542.9,1158.0M195.0,1151.8L313.6,1158.0M1716.5,333.0L1734.0,363.4M1702.6,333.0L1734.0,387.4M1674.9,333.0L1734.0,435.4M1661.0,333.0L1734.0,459.4M1633.3,333.0L1734.0,507.4M1619.5,333.0L1734.0,531.4M1591.8,333.0L1734.0,579.4M1577.9,333.0L1734.0,603.4M1550.2,333.0L1734.0,651.4M1536.3,333.0L1734.0,675.4M1508.6,333.0L1734.0,723.4M1494.8,333.0L1734.0,747.4M1467.0,333.0L1734.0,795.4M1453.2,333.0L1734.0,819.4M1425.5,333.0L1734.0,867.4M1411.6,333.0L1734.0,891.4M1383.9,333.0L1734.0,939.4M1370.1,333.0L1734.0,963.4M1342.3,333.0L1734.0,1011.4M1328.5,333.0L1734.0,1035.4M1300.8,333.0L1734.0,1083.4M1286.9,333.0L1734.0,1107.4M1259.2,333.0L1734.0,1155.4M1245.3,333.0L1721.7,1158.0M1217.6,333.0L1693.9,1158.0M1203.8,333.0L1680.1,1158.0M1176.1,333.0L1652.4,1158.0M1162.2,333.0L1638.5,1158.0M1134.5,333.0L1610.8,1158.0M1120.6,333.0L1597.0,1158.0M1092.9,333.0L1569.2,1158.0M1079.1,333.0L1555.4,1158.0M1051.4,333.0L1527.7,1158.0M1037.5,333.0L1513.8,1158.0M1009.8,333.0L1486.1,1158.0M995.9,333.0L1472.2,1158.0M968.2,333.0L1444.5,1158.0M954.4,333.0L1430.7,1158.0M926.6,333.0L1403.0,1158.0M912.8,333.0L1389.1,1158.0M885.1,333.0L1361.4,1158.0M871.2,333.0L1347.5,1158.0M843.5,333.0L1319.8,1158.0M829.7,333.0L1306.0,1158.0M801.9,333.0L1278.3,1158.0M788.1,333.0L1264.4,1158.0M760.4,333.0L1236.7,1158.0M746.5,333.0L1222.8,1158.0M718.8,333.0L1195.1,1158.0M704.9,333.0L1181.3,1158.0M677.2,333.0L1153.5,1158.0M663.4,333.0L1139.7,1158.0M635.7,333.0L1112.0,1158.0M621.8,333.0L1098.1,1158.0M594.1,333.0L1070.4,1158.0M580.2,333.0L1056.6,1158.0M552.5,333.0L1028.8,1158.0M538.7,333.0L1015.0,1158.0M511.0,333.0L987.3,1158.0M497.1,333.0L973.4,1158.0M469.4,333.0L945.7,1158.0M455.5,333.0L931.8,1158.0M427.8,333.0L904.1,1158.0M414.0,333.0L890.3,1158.0M386.2,333.0L862.6,1158.0M372.4,333.0L848.7,1158.0M344.7,333.0L821.0,1158.0M330.8,333.0L807.1,1158.0M303.1,333.0L779.4,1158.0M289.3,333.0L765.6,1158.0M261.5,333.0L737.9,1158.0M247.7,333.0L724.0,1158.0M220.0,333.0L696.3,1158.0M206.1,333.0L682.4,1158.0M195.0,361.7L654.7,1158.0M195.0,385.7L640.9,1158.0M195.0,433.7L613.1,1158.0M195.0,457.7L599.3,1158.0M195.0,505.7L571.6,1158.0M195.0,529.7L557.7,1158.0M195.0,577.7L530.0,1158.0M195.0,601.7L516.2,1158.0M195.0,649.7L488.4,1158.0M195.0,673.7L474.6,1158.0M195.0,721.7L446.9,1158.0M195.0,745.7L433.0,1158.0M195.0,793.7L405.3,1158.0M195.0,817.7L391.4,1158.0M195.0,865.7L363.7,1158.0M195.0,889.7L349.9,1158.0M195.0,937.7L322.2,1158.0M195.0,961.7L308.3,1158.0M195.0,1009.7L280.6,1158.0M195.0,1033.7L266.7,1158.0M195.0,1081.7L239.0,1158.0M195.0,1105.7L225.2,1158.0M195.0,1153.7L197.5,1158.0" stroke="#353433" stroke-width="1.1" fill="none"/><path d="M1539.0,333.0L1734.0,343.2M851.1,333.0L1734.0,379.3M195.0,334.7L1734.0,415.3M195.0,370.7L1734.0,451.4M195.0,406.8L1734.0,487.4M195.0,442.8L1734.0,523.5M195.0,478.9L1734.0,559.5M195.0,514.9L1734.0,595.6M195.0,551.0L1734.0,631.6M195.0,587.0L1734.0,667.7M195.0,623.1L1734.0,703.7M195.0,659.1L1734.0,739.8M195.0,695.2L1734.0,775.8M195.0,731.2L1734.0,811.9M195.0,767.3L1734.0,847.9M195.0,803.3L1734.0,884.0M195.0,839.4L1734.0,920.0M195.0,875.4L1734.0,956.1M195.0,911.5L1734.0,992.1M195.0,947.5L1734.0,1028.2M195.0,983.6L1734.0,1064.2M195.0,1019.6L1734.0,1100.3M195.0,1055.7L1734.0,1136.3M195.0,1091.7L1460.0,1158.0M195.0,1127.8L772.2,1158.0M1730.3,333.0L1734.0,339.4M1688.7,333.0L1734.0,411.4M1647.2,333.0L1734.0,483.4M1605.6,333.0L1734.0,555.4M1564.0,333.0L1734.0,627.4M1522.5,333.0L1734.0,699.4M1480.9,333.0L1734.0,771.4M1439.3,333.0L1734.0,843.4M1397.8,333.0L1734.0,915.4M1356.2,333.0L1734.0,987.4M1314.6,333.0L1734.0,1059.4M1273.1,333.0L1734.0,1131.4M1231.5,333.0L1707.8,1158.0M1189.9,333.0L1666.2,1158.0M1148.3,333.0L1624.7,1158.0M1106.8,333.0L1583.1,1158.0M1065.2,333.0L1541.5,1158.0M1023.6,333.0L1500.0,1158.0M982.1,333.0L1458.4,1158.0M940.5,333.0L1416.8,1158.0M898.9,333.0L1375.2,1158.0M857.4,333.0L1333.7,1158.0M815.8,333.0L1292.1,1158.0M774.2,333.0L1250.5,1158.0M732.7,333.0L1209.0,1158.0M691.1,333.0L1167.4,1158.0M649.5,333.0L1125.8,1158.0M607.9,333.0L1084.3,1158.0M566.4,333.0L1042.7,1158.0M524.8,333.0L1001.1,1158.0M483.2,333.0L959.6,1158.0M441.7,333.0L918.0,1158.0M400.1,333.0L876.4,1158.0M358.5,333.0L834.8,1158.0M317.0,333.0L793.3,1158.0M275.4,333.0L751.7,1158.0M233.8,333.0L710.1,1158.0M195.0,337.7L668.6,1158.0M195.0,409.7L627.0,1158.0M195.0,481.7L585.4,1158.0M195.0,553.7L543.9,1158.0M195.0,625.7L502.3,1158.0M195.0,697.7L460.7,1158.0M195.0,769.7L419.2,1158.0M195.0,841.7L377.6,1158.0M195.0,913.7L336.0,1158.0M195.0,985.7L294.4,1158.0M195.0,1057.7L252.9,1158.0M195.0,1129.7L211.3,1158.0" stroke="#3c3c3b" stroke-width="1.8" fill="none"/></g>
<g clip-path="url(#c_njs)"><path d="M1624.4,333.0L1734.0,356.3M1566.6,333.0L1734.0,368.6M1451.2,333.0L1734.0,393.1M1393.5,333.0L1734.0,405.4M1278.1,333.0L1734.0,429.9M1220.3,333.0L1734.0,442.2M1104.9,333.0L1734.0,466.7M1047.2,333.0L1734.0,479.0M931.8,333.0L1734.0,503.5M874.0,333.0L1734.0,515.8M758.6,333.0L1734.0,540.3M700.9,333.0L1734.0,552.6M585.5,333.0L1734.0,577.1M527.7,333.0L1734.0,589.4M412.3,333.0L1734.0,613.9M354.6,333.0L1734.0,626.2M239.2,333.0L1734.0,650.7M195.0,335.9L1734.0,663.0M195.0,360.4L1734.0,687.5M195.0,372.7L1734.0,699.8M195.0,397.2L1734.0,724.3M195.0,409.5L1734.0,736.6M195.0,434.0L1734.0,761.2M195.0,446.3L1734.0,773.4M195.0,470.8L1734.0,798.0M195.0,483.1L1734.0,810.2M195.0,507.6L1734.0,834.8M195.0,519.9L1734.0,847.0M195.0,544.4L1734.0,871.6M195.0,556.7L1734.0,883.8M195.0,581.2L1734.0,908.4M195.0,593.5L1734.0,920.6M195.0,618.0L1734.0,945.2M195.0,630.3L1734.0,957.4M195.0,654.9L1734.0,982.0M195.0,667.1L1734.0,994.2M195.0,691.7L1734.0,1018.8M195.0,703.9L1734.0,1031.0M195.0,728.5L1734.0,1055.6M195.0,740.7L1734.0,1067.9M195.0,765.3L1734.0,1092.4M195.0,777.5L1734.0,1104.7M195.0,802.1L1734.0,1129.2M195.0,814.3L1734.0,1141.5M195.0,838.9L1696.4,1158.0M195.0,851.1L1638.7,1158.0M195.0,875.7L1523.2,1158.0M195.0,887.9L1465.5,1158.0M195.0,912.5L1350.1,1158.0M195.0,924.8L1292.4,1158.0M195.0,949.3L1176.9,1158.0M195.0,961.6L1119.2,1158.0M195.0,986.1L1003.8,1158.0M195.0,998.4L946.1,1158.0M195.0,1022.9L830.6,1158.0M195.0,1035.2L772.9,1158.0M195.0,1059.7L657.5,1158.0M195.0,1072.0L599.7,1158.0M195.0,1096.5L484.3,1158.0M195.0,1108.8L426.6,1158.0M195.0,1133.3L311.2,1158.0M195.0,1145.6L253.4,1158.0M215.7,333.0L195.0,350.9M228.4,333.0L195.0,362.2M253.9,333.0L195.0,385.2M266.7,333.0L195.0,397.0M292.1,333.0L195.0,421.2M304.9,333.0L195.0,433.6M330.3,333.0L195.0,459.0M343.1,333.0L195.0,472.0M368.5,333.0L195.0,498.6M381.3,333.0L195.0,512.3M406.8,333.0L195.0,540.4M419.5,333.0L195.0,554.8M445.0,333.0L195.0,584.4M457.7,333.0L195.0,599.5M483.2,333.0L195.0,630.8M495.9,333.0L195.0,646.8M521.4,333.0L195.0,679.8M534.1,333.0L195.0,696.8M559.6,333.0L195.0,731.7M572.3,333.0L195.0,749.7M597.8,333.0L195.0,786.7M610.5,333.0L195.0,805.8M636.0,333.0L195.0,845.2M648.7,333.0L195.0,865.5M674.2,333.0L195.0,907.3M686.9,333.0L195.0,929.0M712.4,333.0L195.0,973.6M725.2,333.0L195.0,996.7M750.6,333.0L195.0,1044.4M763.4,333.0L195.0,1069.1M788.8,333.0L195.0,1120.3M801.6,333.0L195.0,1146.7M827.0,333.0L226.7,1158.0M839.8,333.0L246.8,1158.0M865.2,333.0L287.0,1158.0M878.0,333.0L307.0,1158.0M903.5,333.0L347.2,1158.0M916.2,333.0L367.3,1158.0M941.7,333.0L407.4,1158.0M954.4,333.0L427.5,1158.0M979.9,333.0L467.6,1158.0M992.6,333.0L487.7,1158.0M1018.1,333.0L527.8,1158.0M1030.8,333.0L547.9,1158.0M1056.3,333.0L588.1,1158.0M1069.0,333.0L608.1,1158.0M1094.5,333.0L648.3,1158.0M1107.2,333.0L668.4,1158.0M1132.7,333.0L708.5,1158.0M1145.4,333.0L728.6,1158.0M1170.9,333.0L768.7,1158.0M1183.6,333.0L788.8,1158.0M1209.1,333.0L828.9,1158.0M1221.9,333.0L849.0,1158.0M1247.3,333.0L889.2,1158.0M1260.1,333.0L909.2,1158.0M1285.5,333.0L949.4,1158.0M1298.3,333.0L969.5,1158.0M1323.7,333.0L1009.6,1158.0M1336.5,333.0L1029.7,1158.0M1361.9,333.0L1069.8,1158.0M1374.7,333.0L1089.9,1158.0M1400.2,333.0L1130.0,1158.0M1412.9,333.0L1150.1,1158.0M1438.4,333.0L1190.3,1158.0M1451.1,333.0L1210.3,1158.0M1476.6,333.0L1250.5,1158.0M1489.3,333.0L1270.6,1158.0M1514.8,333.0L1310.7,1158.0M1527.5,333.0L1330.8,1158.0M1553.0,333.0L1370.9,1158.0M1565.7,333.0L1391.0,1158.0M1591.2,333.0L1431.1,1158.0M1603.9,333.0L1451.2,1158.0M1629.4,333.0L1491.4,1158.0M1642.1,333.0L1511.4,1158.0M1667.6,333.0L1551.6,1158.0M1680.3,333.0L1571.7,1158.0M1705.8,333.0L1611.8,1158.0M1718.6,333.0L1631.9,1158.0M1734.0,447.9L1672.0,1158.0M1734.0,623.4L1692.1,1158.0M1734.0,1129.1L1732.3,1158.0" stroke="#353433" stroke-width="1.1" fill="none"/><path d="M1682.1,333.0L1734.0,344.0M1508.9,333.0L1734.0,380.8M1335.8,333.0L1734.0,417.6M1162.6,333.0L1734.0,454.4M989.5,333.0L1734.0,491.3M816.3,333.0L1734.0,528.1M643.2,333.0L1734.0,564.9M470.0,333.0L1734.0,601.7M296.9,333.0L1734.0,638.5M195.0,348.2L1734.0,675.3M195.0,385.0L1734.0,712.1M195.0,421.8L1734.0,748.9M195.0,458.6L1734.0,785.7M195.0,495.4L1734.0,822.5M195.0,532.2L1734.0,859.3M195.0,569.0L1734.0,896.1M195.0,605.8L1734.0,932.9M195.0,642.6L1734.0,969.7M195.0,679.4L1734.0,1006.5M195.0,716.2L1734.0,1043.3M195.0,753.0L1734.0,1080.1M195.0,789.8L1734.0,1116.9M195.0,826.6L1734.0,1153.7M195.0,863.4L1580.9,1158.0M195.0,900.2L1407.8,1158.0M195.0,937.0L1234.6,1158.0M195.0,973.8L1061.5,1158.0M195.0,1010.6L888.3,1158.0M195.0,1047.4L715.2,1158.0M195.0,1084.2L542.0,1158.0M195.0,1121.0L368.9,1158.0M195.0,1157.8L195.7,1158.0M203.0,333.0L195.0,339.9M241.2,333.0L195.0,373.6M279.4,333.0L195.0,409.0M317.6,333.0L195.0,446.2M355.8,333.0L195.0,485.2M394.0,333.0L195.0,526.2M432.2,333.0L195.0,569.4M470.4,333.0L195.0,615.0M508.6,333.0L195.0,663.2M546.8,333.0L195.0,714.1M585.1,333.0L195.0,768.0M623.3,333.0L195.0,825.3M661.5,333.0L195.0,886.2M699.7,333.0L195.0,951.1M737.9,333.0L195.0,1020.3M776.1,333.0L195.0,1094.4M814.3,333.0L206.7,1158.0M852.5,333.0L266.9,1158.0M890.7,333.0L327.1,1158.0M928.9,333.0L387.3,1158.0M967.1,333.0L447.6,1158.0M1005.3,333.0L507.8,1158.0M1043.6,333.0L568.0,1158.0M1081.8,333.0L628.2,1158.0M1120.0,333.0L688.4,1158.0M1158.2,333.0L748.7,1158.0M1196.4,333.0L808.9,1158.0M1234.6,333.0L869.1,1158.0M1272.8,333.0L929.3,1158.0M1311.0,333.0L989.5,1158.0M1349.2,333.0L1049.8,1158.0M1387.4,333.0L1110.0,1158.0M1425.6,333.0L1170.2,1158.0M1463.8,333.0L1230.4,1158.0M1502.0,333.0L1290.6,1158.0M1540.3,333.0L1350.9,1158.0M1578.5,333.0L1411.1,1158.0M1616.7,333.0L1471.3,1158.0M1654.9,333.0L1531.5,1158.0M1693.1,333.0L1591.7,1158.0M1731.3,333.0L1652.0,1158.0M1734.0,843.9L1712.2,1158.0" stroke="#3c3c3b" stroke-width="1.8" fill="none"/></g>
<path d="M195,1035 L300,1040 L450,1062 L560,1085 L700,1120 L800,1158 L195,1158 Z" fill="#2c2b2a"/>
<path d="M650,333 L660,338 L704,350 L778,365 L836,377 L895,387 L969,390 L983,389 L1027,374 L1042,361 L1101,356 L1218,355 L1276,360 L1299,378 L1327,406 L1341,427 L1368,459 L1391,478 L1426,489 L1461,505 L1507,521 L1541,542 L1553,560 L1550,573 L1530,590 L1522,598 L1488,606 L1406,616 L1334,617 L1328,591 L1282,592 L1213,598 L1193,602 L1193,628 L1158,628 L1158,603 L1137,606 L744,619 L708,614 L643,601 L579,588 L501,578 L423,565 L332,552 L268,536 L195,528 L190,528 L190,642.75 L228,642.75 L243,657.6 L275,657.6 L296,664 L317.5,668 L381,681 L411,700 L424,696 L424,704 L466,719 L466,732 L491.8,730 L519,715 L547,725.6 L564,747 L615,751 L644,756 L662,750 L692,752 L694,778 L745,777 L1137,744.7 L1166.6,742.7 L1170.7,753 L1187,777.3 L1217.5,777.3 L1217.5,746.8 L1233.7,736.6 L1236,740 L1227.6,757 L1242,761 L1244,771 L1256,765 L1272.4,757 L1292.7,752.9 L1305,761 L1313,789.5 L1319,789.5 L1306,752 L1317,740.7 L1329,738.6 L1345.6,779.3 L1366,775.3 L1366,750.9 L1390,744.7 L1390,723.4 L1396.5,723.4 L1404.6,750.9 L1427,746.8 L1427,721.4 L1435,722.4 L1447,746.8 L1536.8,750.9 L1547,781.4 L1568,780 L1567,739 L1615,732 L1633,766 L1667,788 L1675,807 L1740,815 L1740,500 L1726,491 L1691,487 L1668,480 L1622,478 L1599,473 L1587,459 L1530,452 L1461,448 L1426,441 L1410,429 L1391,413 L1368,397 L1350,376 L1334,360 L1334,344 L1292,330 L650,330 Z" fill="#1a1b1a"/>
<path d="M195,1052 L225,1044 L281,1065 L365,1058 L400,1072 M512,1093 L525,1095 L530,1110 L522,1128 M215,1040 L228,1020" stroke="#1b1b1b" stroke-width="3" fill="none"/>
<path d="M195,362 L624,434 L591,492 L195,423 Z" fill="#2b2c2a"/>
<path d="M195,410 C260,420 300,440 290,455 M250,368 C300,380 330,420 340,450 M420,392 C440,420 470,440 520,470 M520,420 C540,440 560,450 600,470 M450,410 C430,430 420,445 400,458 M560,430 C520,445 500,462 480,475" stroke="#383837" stroke-width="1.4" fill="none"/>
<path d="M317.5,394 L341.9,390 L379.8,393 L401.5,398 L404,408 L390.7,418.6 L379.8,432 L358,437.6 L325.6,436 L321.5,421.4 Z" fill="#1a1b1a"/>
<path d="M211.7,369.8 L225.3,367 L249.7,372.5 L233.4,380.7 L219.8,390 L209,386 Z" fill="#1a1b1a"/>
<path d="M238.8,418 L244,416 L243,426.8 L239,425 Z" fill="#1a1b1a"/>
<path d="M436.8,451 L461.2,448.5 L483,435 L493.7,430.9 L500.5,437.6 L491,448.5 L499,455 L474.8,459 L458.5,462 L439.5,454 Z" fill="#1a1b1a"/>
<path d="M430,430 L442,427 L440,437 L432,439 Z" fill="#1a1b1a"/>
<path d="M594,443 L618.5,440 L613,448.5 L602,452.5 Z" fill="#1a1b1a"/>
<polyline points="195,517 260,521 289,531 389,535 520,551 640,590 745,614" stroke="#444444" stroke-width="3.5" fill="none" stroke-linejoin="round" stroke-linecap="round"/><polyline points="660,342 778,369 836,381 895,391 969,394 1027,378 1042,365 1101,360 1218,359 1276,364 1299,382 1327,410 1368,462 1391,481 1461,509 1541,546 1553,562" stroke="#444444" stroke-width="3" fill="none" stroke-linejoin="round" stroke-linecap="round"/><polyline points="1137,600 1213,596 1330,592 1406,612 1488,602 1530,588 1553,562" stroke="#444444" stroke-width="3" fill="none" stroke-linejoin="round" stroke-linecap="round"/><polyline points="195,498 442,518 591,493 651,488 760,470 900,455 1050,470 1200,500 1300,540 1400,560 1500,565" stroke="#444444" stroke-width="2.5" fill="none" stroke-linejoin="round" stroke-linecap="round"/><polyline points="836,374 872,333" stroke="#444444" stroke-width="3" fill="none" stroke-linejoin="round" stroke-linecap="round"/><polyline points="1223,333 1223,495 1215,545 1213,596" stroke="#444444" stroke-width="3" fill="none" stroke-linejoin="round" stroke-linecap="round"/><polyline points="1280,446.5 1384,411 1425.6,392.4 1488,363 1529.6,334" stroke="#444444" stroke-width="5" fill="none" stroke-linejoin="round" stroke-linecap="round"/><polyline points="1368,510 1375.7,492 1421.4,423.6 1436,396.6 1442,350.8 1425.6,330" stroke="#444444" stroke-width="5" fill="none" stroke-linejoin="round" stroke-linecap="round"/><polyline points="1549,568 1735,450" stroke="#444444" stroke-width="4" fill="none" stroke-linejoin="round" stroke-linecap="round"/><polyline points="1213,595 1271,820" stroke="#444444" stroke-width="6" fill="none" stroke-linejoin="round" stroke-linecap="round"/><polyline points="745,580 713,622 646,757 637,770 612,832 582,890 535,965 515,1004 499,1035 473.5,1094 448,1158" stroke="#444444" stroke-width="7" fill="none" stroke-linejoin="round" stroke-linecap="round"/><polyline points="515,1004 435,1030 417,1055 370,1117 350,1158" stroke="#444444" stroke-width="5" fill="none" stroke-linejoin="round" stroke-linecap="round"/><polyline points="195,957 278,978 448,1032 525,1045 705,1084 760,1099 1000,1158" stroke="#444444" stroke-width="4" fill="none" stroke-linejoin="round" stroke-linecap="round"/><polyline points="195,1020 427,1040 525,1045" stroke="#444444" stroke-width="4" fill="none" stroke-linejoin="round" stroke-linecap="round"/><polyline points="195,754 328,770 444,788 582,816 700,840" stroke="#444444" stroke-width="2.5" fill="none" stroke-linejoin="round" stroke-linecap="round"/><polyline points="195,804 374,844 600,890 760,920" stroke="#444444" stroke-width="2.5" fill="none" stroke-linejoin="round" stroke-linecap="round"/><polyline points="195,888 236,899 294,888 351,869 374,869 421,883 490,913 508,931 513,959" stroke="#444444" stroke-width="3.5" fill="none" stroke-linejoin="round" stroke-linecap="round"/><polyline points="194,667 254,670 292,679 339,694 360,704 381,725.6 424,736 487.5,740.5 551,749 615,759.6 657.5,768" stroke="#444444" stroke-width="3.5" fill="none" stroke-linejoin="round" stroke-linecap="round"/><polyline points="194,681 203,689.5 275,685 328,700 339,715 334.5,730 351.5,734 351.5,710.8" stroke="#444444" stroke-width="3" fill="none" stroke-linejoin="round" stroke-linecap="round"/><polyline points="194,732 317.5,757.5 402.5,751 466,757.5 540.6,753 572.5,766 572.5,780" stroke="#444444" stroke-width="3" fill="none" stroke-linejoin="round" stroke-linecap="round"/><polyline points="700,889 863,904 940,922 1015,922 1046,932 1150,945 1209,960 1320,989 1505,996 1615,985 1734,952" stroke="#444444" stroke-width="5" fill="none" stroke-linejoin="round" stroke-linecap="round"/><polyline points="1209,808 1400,800 1652,793 1734,790" stroke="#444444" stroke-width="3.5" fill="none" stroke-linejoin="round" stroke-linecap="round"/><polyline points="1271,820 1290,900 1331,985 1327,1026 1300,1090 1272,1158" stroke="#444444" stroke-width="5" fill="none" stroke-linejoin="round" stroke-linecap="round"/><polyline points="1331,989 1430,959 1505,915 1560,870" stroke="#444444" stroke-width="3" fill="none" stroke-linejoin="round" stroke-linecap="round"/><polyline points="950,1052 1320,1100 1500,1130 1600,1158" stroke="#444444" stroke-width="3" fill="none" stroke-linejoin="round" stroke-linecap="round"/><polyline points="760,1030 950,1052" stroke="#444444" stroke-width="3" fill="none" stroke-linejoin="round" stroke-linecap="round"/><polyline points="1209,808 1209,915 1230,960" stroke="#444444" stroke-width="3" fill="none" stroke-linejoin="round" stroke-linecap="round"/><polyline points="1400,1158 1470,989 1520,900 1560,800" stroke="#444444" stroke-width="3" fill="none" stroke-linejoin="round" stroke-linecap="round"/><polyline points="586,975 633,1014 680,1024 760,1001" stroke="#444444" stroke-width="3" fill="none" stroke-linejoin="round" stroke-linecap="round"/><polyline points="540,962 587,975" stroke="#444444" stroke-width="3" fill="none" stroke-linejoin="round" stroke-linecap="round"/><polyline points="241,1102 357,1127 500,1150" stroke="#444444" stroke-width="3" fill="none" stroke-linejoin="round" stroke-linecap="round"/><polyline points="241,1102 195,1140" stroke="#444444" stroke-width="3" fill="none" stroke-linejoin="round" stroke-linecap="round"/><polyline points="651,774 692,778 707,792 714,811 700,824 663,818 648,806" stroke="#444444" stroke-width="4" fill="none" stroke-linejoin="round" stroke-linecap="round"/><polyline points="623,821 663,821 707,827 760,836" stroke="#444444" stroke-width="3.5" fill="none" stroke-linejoin="round" stroke-linecap="round"/><polyline points="648,833 700,836 760,842" stroke="#444444" stroke-width="3.5" fill="none" stroke-linejoin="round" stroke-linecap="round"/><polyline points="560,760 600,770 651,774 700,781 745,790" stroke="#444444" stroke-width="3" fill="none" stroke-linejoin="round" stroke-linecap="round"/><polyline points="606,846 660,860 720,880 760,890" stroke="#444444" stroke-width="3" fill="none" stroke-linejoin="round" stroke-linecap="round"/><polyline points="1268,803 1255,840 1281,928 1324,980 1335,991" stroke="#444444" stroke-width="4" fill="none" stroke-linejoin="round" stroke-linecap="round"/><polyline points="1212,816 1233.6,805 1303,797 1389,794.5 1454,786 1500,773 1600,760" stroke="#444444" stroke-width="4" fill="none" stroke-linejoin="round" stroke-linecap="round"/><polyline points="1212,816 1216,889.5 1229,943.5 1251,965 1324,980" stroke="#444444" stroke-width="3.5" fill="none" stroke-linejoin="round" stroke-linecap="round"/><polyline points="1130,868 1216,864 1346,853 1500,842 1600,835" stroke="#444444" stroke-width="3" fill="none" stroke-linejoin="round" stroke-linecap="round"/><polyline points="1130,889.5 1216,881 1346,868 1500,855 1600,848" stroke="#444444" stroke-width="3" fill="none" stroke-linejoin="round" stroke-linecap="round"/><polyline points="1354.5,799 1367.5,842 1397.7,984.5" stroke="#444444" stroke-width="3" fill="none" stroke-linejoin="round" stroke-linecap="round"/><polyline points="1335,991 1500,991" stroke="#444444" stroke-width="3" fill="none" stroke-linejoin="round" stroke-linecap="round"/><polyline points="1464.6,760 1464.6,842 1443,954 1421.5,1010 1400,1070 1380,1158" stroke="#444444" stroke-width="3.5" fill="none" stroke-linejoin="round" stroke-linecap="round"/><polyline points="1100,606 1227.5,593 1333.8,586.6 1440,584.5 1525,580 1550.5,563" stroke="#444444" stroke-width="3.5" fill="none" stroke-linejoin="round" stroke-linecap="round"/><polyline points="1206,561 1219,533.5 1223,491" stroke="#444444" stroke-width="3" fill="none" stroke-linejoin="round" stroke-linecap="round"/><polyline points="1214.8,593 1248.8,546 1276,495 1280,440 1290,400" stroke="#444444" stroke-width="3" fill="none" stroke-linejoin="round" stroke-linecap="round"/><polyline points="1170,440 1153,542 1170,606" stroke="#444444" stroke-width="3" fill="none" stroke-linejoin="round" stroke-linecap="round"/><polyline points="1355,529 1387,476 1408,440 1437,406" stroke="#444444" stroke-width="4.5" fill="none" stroke-linejoin="round" stroke-linecap="round"/><polyline points="1100,544 1333.8,554.8 1550.5,567.5" stroke="#444444" stroke-width="2.5" fill="none" stroke-linejoin="round" stroke-linecap="round"/><polyline points="1100,467.6 1227.5,467.6 1300,480" stroke="#444444" stroke-width="2.5" fill="none" stroke-linejoin="round" stroke-linecap="round"/><polyline points="1100,489 1217,491 1280.6,499.5 1376,510" stroke="#444444" stroke-width="2.5" fill="none" stroke-linejoin="round" stroke-linecap="round"/><polyline points="950,450 1100,467.6" stroke="#444444" stroke-width="2.5" fill="none" stroke-linejoin="round" stroke-linecap="round"/><polyline points="950,470 1100,489" stroke="#444444" stroke-width="2.5" fill="none" stroke-linejoin="round" stroke-linecap="round"/><polyline points="1413,388 1467,367.4 1520,350 1560,333" stroke="#444444" stroke-width="3" fill="none" stroke-linejoin="round" stroke-linecap="round"/><polyline points="1425.6,394.5 1509,386 1571,384 1733,394.5" stroke="#444444" stroke-width="2.5" fill="none" stroke-linejoin="round" stroke-linecap="round"/><polyline points="1434,413 1509,398.6 1733,407" stroke="#444444" stroke-width="2.5" fill="none" stroke-linejoin="round" stroke-linecap="round"/><polyline points="1430,425.7 1467,440 1577.4,444.4 1600,436 1733,442" stroke="#444444" stroke-width="3" fill="none" stroke-linejoin="round" stroke-linecap="round"/><polyline points="1554.6,333 1579.5,442" stroke="#444444" stroke-width="2.5" fill="none" stroke-linejoin="round" stroke-linecap="round"/><polyline points="1519,333 1523,392" stroke="#444444" stroke-width="2.5" fill="none" stroke-linejoin="round" stroke-linecap="round"/><polyline points="1671,500 1733,450.6" stroke="#444444" stroke-width="4" fill="none" stroke-linejoin="round" stroke-linecap="round"/><polyline points="1640,333 1660,440" stroke="#444444" stroke-width="2.5" fill="none" stroke-linejoin="round" stroke-linecap="round"/><polyline points="763,827 1180,827" stroke="#444444" stroke-width="3" fill="none" stroke-linejoin="round" stroke-linecap="round"/><polyline points="763,842.7 1180,842.7" stroke="#444444" stroke-width="2.5" fill="none" stroke-linejoin="round" stroke-linecap="round"/><polyline points="846,867 910,867 912,875 1150,875" stroke="#444444" stroke-width="3" fill="none" stroke-linejoin="round" stroke-linecap="round"/><polyline points="846,887 1150,887" stroke="#444444" stroke-width="3" fill="none" stroke-linejoin="round" stroke-linecap="round"/><polyline points="763,810 766,850" stroke="#444444" stroke-width="3" fill="none" stroke-linejoin="round" stroke-linecap="round"/><polyline points="846,810 846,887" stroke="#444444" stroke-width="3" fill="none" stroke-linejoin="round" stroke-linecap="round"/><polyline points="867,810 865,905" stroke="#444444" stroke-width="3" fill="none" stroke-linejoin="round" stroke-linecap="round"/><polyline points="905.6,810 908,875" stroke="#444444" stroke-width="3" fill="none" stroke-linejoin="round" stroke-linecap="round"/><polyline points="923.8,810 924,835" stroke="#444444" stroke-width="3" fill="none" stroke-linejoin="round" stroke-linecap="round"/><polyline points="1074,840 1078,922" stroke="#444444" stroke-width="3" fill="none" stroke-linejoin="round" stroke-linecap="round"/><polyline points="1141.5,810 1150,938" stroke="#444444" stroke-width="3" fill="none" stroke-linejoin="round" stroke-linecap="round"/>
<path d="M1188,779 L1210,844" stroke="#1b1b1b" stroke-width="4"/>
<path d="M693.6,854.8 L723,856.2 L714,887 L684.8,887 Z M1183,1062 L1208,1058 L1213,1090 L1190,1094 Z" fill="#1a1b1a"/>
<polyline points="195,585.5 745,690 1137,684 1626.5,646 1734,655" stroke="#575757" stroke-width="1.5" stroke-dasharray="13 4" fill="none"/>
<path d="M512,579.9130434782609L505.4,592.3M526,582.3478260869565L517.5,598.2M540,584.7826086956521L529.7,604.2M554,587.2173913043479L547.4,599.6M568,589.6521739130435L559.5,605.5M582,592.0869565217391L571.7,611.5M596,594.5217391304348L589.4,606.9M610,596.9565217391304L601.5,612.8M624,599.3913043478261L613.7,618.8M638,601.8260869565217L631.4,614.2M652,604.2608695652174L643.5,620.2M666,606.695652173913L655.7,626.1M680,609.1304347826087L673.4,621.5M694,611.5652173913044L685.5,627.5M708,614.0L697.7,633.4" stroke="#2c2b2a" stroke-width="4" fill="none"/>
<path d="M1567,739 L1590,776 L1578,809 L1551,822 L1553,832 L1580,832 L1630,920 L1644,942 L1648,942 L1652,910 L1595,790 L1571,740 Z" fill="#1a1b1a"/>
<path d="M722,333 L800,333 L790,342 L760,346 L735,342 Z" fill="#2a2a29"/>
<path d="M1650,531 L1668,519 L1714,519 L1740,528 L1740,590 L1700,590 L1660,575 L1648,555 Z" fill="#2a2a29"/>
<g font-family="Liberation Sans"><text x="232" y="338.9" font-size="14.5" textLength="52.4" lengthAdjust="spacingAndGlyphs" letter-spacing="1.6" fill="none" stroke="#1f1f1f" stroke-width="2.4" stroke-linejoin="round">HARLEM</text><text x="262.3" y="412" font-size="12.8" textLength="93.2" lengthAdjust="spacingAndGlyphs" letter-spacing="1.6" fill="none" stroke="#1f1f1f" stroke-width="2.4" stroke-linejoin="round">MANHATTAN</text><text x="479" y="401.8" font-size="12.1" textLength="45.5" lengthAdjust="spacingAndGlyphs" letter-spacing="1.6" fill="none" stroke="#1f1f1f" stroke-width="2.4" stroke-linejoin="round">UPPER</text><text x="467" y="417.6" font-size="13.2" textLength="69.0" lengthAdjust="spacingAndGlyphs" letter-spacing="1.6" fill="none" stroke="#1f1f1f" stroke-width="2.4" stroke-linejoin="round">EAST SIDE</text><text x="558" y="367" font-size="14.5" textLength="77.0" lengthAdjust="spacingAndGlyphs" letter-spacing="1.6" fill="none" stroke="#1f1f1f" stroke-width="2.4" stroke-linejoin="round">LENOX HILL</text><text x="784" y="400" font-size="14.5" textLength="78.6" lengthAdjust="spacingAndGlyphs" letter-spacing="1.6" fill="none" stroke="#1f1f1f" stroke-width="2.4" stroke-linejoin="round">TUDOR CITY</text><text x="813.7" y="432" font-size="15.1" textLength="56.0" lengthAdjust="spacingAndGlyphs" letter-spacing="1.6" fill="none" stroke="#1f1f1f" stroke-width="2.4" stroke-linejoin="round">MURRAY</text><text x="826.5" y="448" font-size="13.8" textLength="29.5" lengthAdjust="spacingAndGlyphs" letter-spacing="1.6" fill="none" stroke="#1f1f1f" stroke-width="2.4" stroke-linejoin="round">HILL</text><text x="731" y="482" font-size="14.3" textLength="65.0" lengthAdjust="spacingAndGlyphs" letter-spacing="1.6" fill="none" stroke="#1f1f1f" stroke-width="2.4" stroke-linejoin="round">MIDTOWN</text><text x="720" y="498.5" font-size="15.1" textLength="86.7" lengthAdjust="spacingAndGlyphs" letter-spacing="1.6" fill="none" stroke="#1f1f1f" stroke-width="2.4" stroke-linejoin="round">MANHATTAN</text><text x="819.4" y="485" font-size="15.1" textLength="85.6" lengthAdjust="spacingAndGlyphs" letter-spacing="1.6" fill="none" stroke="#1f1f1f" stroke-width="2.4" stroke-linejoin="round">KOREATOWN</text><text x="877.5" y="582" font-size="15.6" textLength="64.5" lengthAdjust="spacingAndGlyphs" letter-spacing="1.6" fill="none" stroke="#1f1f1f" stroke-width="2.4" stroke-linejoin="round">CHELSEA</text><text x="1345.6" y="343.6" font-size="14.6" textLength="72.1" lengthAdjust="spacingAndGlyphs" letter-spacing="1.6" fill="none" stroke="#1f1f1f" stroke-width="2.4" stroke-linejoin="round">NAVY YARD</text><text x="1224" y="415.7" font-size="13.8" textLength="46.6" lengthAdjust="spacingAndGlyphs" letter-spacing="1.6" fill="none" stroke="#1f1f1f" stroke-width="2.4" stroke-linejoin="round">LOWER</text><text x="1212.4" y="431.7" font-size="14.7" textLength="69.6" lengthAdjust="spacingAndGlyphs" letter-spacing="1.6" fill="none" stroke="#1f1f1f" stroke-width="2.4" stroke-linejoin="round">EAST SIDE</text><text x="1075" y="444" font-size="14.5" textLength="34.0" lengthAdjust="spacingAndGlyphs" letter-spacing="1.6" fill="none" stroke="#1f1f1f" stroke-width="2.4" stroke-linejoin="round">EAST</text><text x="1063.5" y="460" font-size="14.3" textLength="56.5" lengthAdjust="spacingAndGlyphs" letter-spacing="1.6" fill="none" stroke="#1f1f1f" stroke-width="2.4" stroke-linejoin="round">VILLAGE</text><text x="1234.5" y="480" font-size="15.1" textLength="83.2" lengthAdjust="spacingAndGlyphs" letter-spacing="1.6" fill="none" stroke="#1f1f1f" stroke-width="2.4" stroke-linejoin="round">CHINATOWN</text><text x="1383.8" y="417.5" font-size="14.7" textLength="49.9" lengthAdjust="spacingAndGlyphs" letter-spacing="1.6" fill="none" stroke="#1f1f1f" stroke-width="2.4" stroke-linejoin="round">DUMBO</text><text x="1623" y="366.4" font-size="14.7" textLength="64.0" lengthAdjust="spacingAndGlyphs" letter-spacing="1.6" fill="none" stroke="#1f1f1f" stroke-width="2.4" stroke-linejoin="round">GOWANUS</text><text x="1590.8" y="425" font-size="14.3" textLength="54.6" lengthAdjust="spacingAndGlyphs" letter-spacing="1.6" fill="none" stroke="#1f1f1f" stroke-width="2.4" stroke-linejoin="round">COBBLE</text><text x="1603" y="440.7" font-size="13.8" textLength="29.6" lengthAdjust="spacingAndGlyphs" letter-spacing="1.6" fill="none" stroke="#1f1f1f" stroke-width="2.4" stroke-linejoin="round">HILL</text><text x="1044.6" y="506.7" font-size="14.7" textLength="83.9" lengthAdjust="spacingAndGlyphs" letter-spacing="1.6" fill="none" stroke="#1f1f1f" stroke-width="2.4" stroke-linejoin="round">GREENWICH</text><text x="1057.8" y="522.8" font-size="14.9" textLength="57.2" lengthAdjust="spacingAndGlyphs" letter-spacing="1.6" fill="none" stroke="#1f1f1f" stroke-width="2.4" stroke-linejoin="round">VILLAGE</text><text x="1189" y="509.2" font-size="14.7" textLength="37.7" lengthAdjust="spacingAndGlyphs" letter-spacing="1.6" fill="none" stroke="#1f1f1f" stroke-width="2.4" stroke-linejoin="round">SOHO</text><text x="1407" y="598.5" font-size="14.7" textLength="63.0" lengthAdjust="spacingAndGlyphs" letter-spacing="1.6" fill="none" stroke="#1f1f1f" stroke-width="2.4" stroke-linejoin="round">BATTERY</text><text x="1401.6" y="614.5" font-size="14.7" textLength="73.9" lengthAdjust="spacingAndGlyphs" letter-spacing="1.6" fill="none" stroke="#1f1f1f" stroke-width="2.4" stroke-linejoin="round">PARK CITY</text><text x="710.5" y="787" font-size="15.1" textLength="39.5" lengthAdjust="spacingAndGlyphs" letter-spacing="1.6" fill="none" stroke="#1f1f1f" stroke-width="2.4" stroke-linejoin="round">LINC</text><text x="711" y="804" font-size="15.1" textLength="41.0" lengthAdjust="spacingAndGlyphs" letter-spacing="1.6" fill="none" stroke="#1f1f1f" stroke-width="2.4" stroke-linejoin="round">HARB</text><text x="728" y="866" font-size="16.8" textLength="98.6" lengthAdjust="spacingAndGlyphs" letter-spacing="1.6" fill="none" stroke="#1f1f1f" stroke-width="2.4" stroke-linejoin="round">THE SHADES</text><text x="1470.5" y="751" font-size="15.1" textLength="69.2" lengthAdjust="spacingAndGlyphs" letter-spacing="1.6" fill="none" stroke="#1f1f1f" stroke-width="2.4" stroke-linejoin="round">COLGATE</text><text x="1473" y="768.8" font-size="15.3" textLength="63.0" lengthAdjust="spacingAndGlyphs" letter-spacing="1.6" fill="none" stroke="#1f1f1f" stroke-width="2.4" stroke-linejoin="round">CENTER</text><text x="1695" y="338" font-size="15.1" textLength="34.0" lengthAdjust="spacingAndGlyphs" letter-spacing="1.6" fill="none" stroke="#1f1f1f" stroke-width="2.4" stroke-linejoin="round">PARK</text><text x="1305.3" y="538.6" font-size="30.0" textLength="116.9" lengthAdjust="spacingAndGlyphs" fill="none" stroke="#1f1f1f" stroke-width="2.6" stroke-linejoin="round">New York</text><text x="260" y="752.6" font-size="22.6" textLength="143.8" lengthAdjust="spacingAndGlyphs" fill="none" stroke="#1f1f1f" stroke-width="2.6" stroke-linejoin="round">West New York</text><text x="374.9" y="872.9" font-size="25.2" textLength="107.0" lengthAdjust="spacingAndGlyphs" fill="none" stroke="#1f1f1f" stroke-width="2.6" stroke-linejoin="round">Union City</text><text x="1001" y="837.2" font-size="26.8" textLength="91.3" lengthAdjust="spacingAndGlyphs" fill="none" stroke="#1f1f1f" stroke-width="2.6" stroke-linejoin="round">Hoboken</text><text x="1401" y="916" font-size="25.4" textLength="127.6" lengthAdjust="spacingAndGlyphs" fill="none" stroke="#1f1f1f" stroke-width="2.6" stroke-linejoin="round">Jersey City</text><text x="195" y="722.3" font-size="22.2" textLength="88.0" lengthAdjust="spacingAndGlyphs" fill="none" stroke="#1f1f1f" stroke-width="2.6" stroke-linejoin="round">uttenberg</text><text x="540.5" y="805.5" font-size="23.9" textLength="117.5" lengthAdjust="spacingAndGlyphs" fill="none" stroke="#1f1f1f" stroke-width="2.6" stroke-linejoin="round">Weehawken</text><text x="1711.6" y="1021" font-size="19.4" textLength="28.4" lengthAdjust="spacingAndGlyphs" fill="none" stroke="#1f1f1f" stroke-width="2.6" stroke-linejoin="round">Co</text><text x="388" y="366.8" font-size="12.1" text-anchor="middle" textLength="50.6" lengthAdjust="spacingAndGlyphs" transform="rotate(-45 388 362.6)" fill="none" stroke="#1f1f1f" stroke-width="2.2" stroke-linejoin="round">E 92nd St</text><text x="501" y="361.0" font-size="12.1" text-anchor="middle" textLength="47.3" lengthAdjust="spacingAndGlyphs" transform="rotate(-50 501 356.8)" fill="none" stroke="#1f1f1f" stroke-width="2.2" stroke-linejoin="round">E 80th St</text><text x="532.6" y="364.5" font-size="12.1" text-anchor="middle" textLength="47.4" lengthAdjust="spacingAndGlyphs" transform="rotate(-50 532.6 360.3)" fill="none" stroke="#1f1f1f" stroke-width="2.2" stroke-linejoin="round">E 76th St</text><text x="240" y="470.8" font-size="12.6" text-anchor="middle" textLength="52.4" lengthAdjust="spacingAndGlyphs" transform="rotate(-42 240 466.4)" fill="none" stroke="#1f1f1f" stroke-width="2.2" stroke-linejoin="round">W 97th St</text><text x="277.4" y="482.4" font-size="12.6" text-anchor="middle" textLength="56.0" lengthAdjust="spacingAndGlyphs" transform="rotate(-43 277.4 478)" fill="none" stroke="#1f1f1f" stroke-width="2.2" stroke-linejoin="round">W 92nd St</text><text x="316" y="494.1" font-size="12.7" text-anchor="middle" textLength="52.8" lengthAdjust="spacingAndGlyphs" transform="rotate(-45 316 489.7)" fill="none" stroke="#1f1f1f" stroke-width="2.2" stroke-linejoin="round">W 87th St</text><text x="353" y="498.4" font-size="12.7" text-anchor="middle" textLength="53.6" lengthAdjust="spacingAndGlyphs" transform="rotate(-46 353 494)" fill="none" stroke="#1f1f1f" stroke-width="2.2" stroke-linejoin="round">W 83rd St</text><text x="473" y="512.8" font-size="12.7" text-anchor="middle" textLength="53.2" lengthAdjust="spacingAndGlyphs" transform="rotate(-48 473 508.3)" fill="none" stroke="#1f1f1f" stroke-width="2.2" stroke-linejoin="round">W 70th St</text><text x="620" y="403.3" font-size="12.3" text-anchor="middle" textLength="48.6" lengthAdjust="spacingAndGlyphs" transform="rotate(-55 620 399)" fill="none" stroke="#1f1f1f" stroke-width="2.2" stroke-linejoin="round">E 63rd St</text><text x="692.7" y="390.9" font-size="12.2" text-anchor="middle" textLength="47.8" lengthAdjust="spacingAndGlyphs" transform="rotate(-57 692.7 386.6)" fill="none" stroke="#1f1f1f" stroke-width="2.2" stroke-linejoin="round">E 56th St</text><text x="756.4" y="419.3" font-size="12.3" text-anchor="middle" textLength="48.3" lengthAdjust="spacingAndGlyphs" transform="rotate(-58 756.4 415)" fill="none" stroke="#1f1f1f" stroke-width="2.2" stroke-linejoin="round">E 47th St</text><text x="612" y="511.5" font-size="12.7" text-anchor="middle" textLength="53.1" lengthAdjust="spacingAndGlyphs" transform="rotate(-55 612 507)" fill="none" stroke="#1f1f1f" stroke-width="2.2" stroke-linejoin="round">W 56th St</text><text x="643" y="523.9" font-size="12.8" text-anchor="middle" textLength="56.7" lengthAdjust="spacingAndGlyphs" transform="rotate(-55 643 519.4)" fill="none" stroke="#1f1f1f" stroke-width="2.2" stroke-linejoin="round">W 52nd St</text><text x="669.7" y="564.5" font-size="13.0" text-anchor="middle" textLength="54.1" lengthAdjust="spacingAndGlyphs" transform="rotate(-57 669.7 560)" fill="none" stroke="#1f1f1f" stroke-width="2.2" stroke-linejoin="round">W 47th St</text><text x="872.5" y="523.9" font-size="12.8" text-anchor="middle" textLength="53.4" lengthAdjust="spacingAndGlyphs" transform="rotate(-62 872.5 519.4)" fill="none" stroke="#1f1f1f" stroke-width="2.2" stroke-linejoin="round">W 29th St</text><text x="809.5" y="571.5" font-size="13.0" text-anchor="middle" textLength="39.8" lengthAdjust="spacingAndGlyphs" transform="rotate(-62 809.5 567)" fill="none" stroke="#1f1f1f" stroke-width="2.2" stroke-linejoin="round">33rd St</text><text x="694.5" y="516.8" font-size="12.8" text-anchor="middle" textLength="40.2" lengthAdjust="spacingAndGlyphs" transform="rotate(17 694.5 512.3)" fill="none" stroke="#1f1f1f" stroke-width="2.2" stroke-linejoin="round">8th Ave</text><text x="915" y="556.8" font-size="12.9" text-anchor="middle" textLength="40.8" lengthAdjust="spacingAndGlyphs" transform="rotate(15 915 552.3)" fill="none" stroke="#1f1f1f" stroke-width="2.2" stroke-linejoin="round">8th Ave</text><text x="664.4" y="609.0" font-size="13.2" text-anchor="middle" textLength="48.4" lengthAdjust="spacingAndGlyphs" transform="rotate(18 664.4 604.4)" fill="none" stroke="#1f1f1f" stroke-width="2.2" stroke-linejoin="round">12th Ave</text><text x="687.4" y="702.7" font-size="13.5" text-anchor="middle" textLength="83.0" lengthAdjust="spacingAndGlyphs" transform="rotate(-62 687.4 698)" fill="none" stroke="#1f1f1f" stroke-width="2.2" stroke-linejoin="round">Lincoln Tunnel</text><text x="1153.5" y="366.2" font-size="12.1" text-anchor="middle" textLength="39.0" lengthAdjust="spacingAndGlyphs" transform="rotate(-3 1153.5 362)" fill="none" stroke="#1f1f1f" stroke-width="2.2" stroke-linejoin="round">FDR Dr</text><text x="1090" y="418.9" font-size="12.3" text-anchor="middle" textLength="30.4" lengthAdjust="spacingAndGlyphs" transform="rotate(8 1090 414.6)" fill="none" stroke="#1f1f1f" stroke-width="2.2" stroke-linejoin="round">Ave A</text><text x="1125" y="402.1" font-size="12.3" text-anchor="middle" textLength="41.5" lengthAdjust="spacingAndGlyphs" transform="rotate(-65 1125 397.8)" fill="none" stroke="#1f1f1f" stroke-width="2.2" stroke-linejoin="round">E 7th St</text><text x="1151.7" y="434.3" font-size="12.4" text-anchor="middle" textLength="42.6" lengthAdjust="spacingAndGlyphs" transform="rotate(-70 1151.7 430)" fill="none" stroke="#1f1f1f" stroke-width="2.2" stroke-linejoin="round">E 3rd St</text><text x="971.4" y="452.2" font-size="12.5" text-anchor="middle" textLength="52.1" lengthAdjust="spacingAndGlyphs" transform="rotate(-65 971.4 447.8)" fill="none" stroke="#1f1f1f" stroke-width="2.2" stroke-linejoin="round">E 22nd St</text><text x="1014" y="454.0" font-size="12.5" text-anchor="middle" textLength="48.8" lengthAdjust="spacingAndGlyphs" transform="rotate(-67 1014 449.6)" fill="none" stroke="#1f1f1f" stroke-width="2.2" stroke-linejoin="round">E 17th St</text><text x="1574.8" y="371.8" font-size="12.1" text-anchor="middle" textLength="41.7" lengthAdjust="spacingAndGlyphs" transform="rotate(80 1574.8 367.5)" fill="none" stroke="#1f1f1f" stroke-width="2.2" stroke-linejoin="round">Dean St</text><text x="1560.5" y="414.3" font-size="12.3" text-anchor="middle" textLength="41.7" lengthAdjust="spacingAndGlyphs" transform="rotate(75 1560.5 410)" fill="none" stroke="#1f1f1f" stroke-width="2.2" stroke-linejoin="round">State St</text><text x="1689" y="411.8" font-size="12.3" text-anchor="middle" textLength="42.9" lengthAdjust="spacingAndGlyphs" transform="rotate(5 1689 407.5)" fill="none" stroke="#1f1f1f" stroke-width="2.2" stroke-linejoin="round">Court St</text><text x="1676.5" y="434.3" font-size="12.4" text-anchor="middle" textLength="45.9" lengthAdjust="spacingAndGlyphs" transform="rotate(5 1676.5 430)" fill="none" stroke="#1f1f1f" stroke-width="2.2" stroke-linejoin="round">Henry St</text><text x="1489" y="431.3" font-size="12.4" text-anchor="middle" textLength="43.2" lengthAdjust="spacingAndGlyphs" transform="rotate(5 1489 427)" fill="none" stroke="#1f1f1f" stroke-width="2.2" stroke-linejoin="round">Hicks St</text><text x="1350" y="450.4" font-size="12.5" text-anchor="middle" textLength="40.2" lengthAdjust="spacingAndGlyphs" transform="rotate(50 1350 446)" fill="none" stroke="#1f1f1f" stroke-width="2.2" stroke-linejoin="round">FDR Dr</text><text x="973.2" y="541.5" font-size="12.9" text-anchor="middle" textLength="53.7" lengthAdjust="spacingAndGlyphs" transform="rotate(-70 973.2 537)" fill="none" stroke="#1f1f1f" stroke-width="2.2" stroke-linejoin="round">W 18th St</text><text x="1619.4" y="539.8" font-size="12.9" text-anchor="middle" textLength="78.8" lengthAdjust="spacingAndGlyphs" transform="rotate(-28 1619.4 535.3)" fill="none" stroke="#1f1f1f" stroke-width="2.2" stroke-linejoin="round">Battery Tunnel</text><text x="1236" y="654.7" font-size="13.3" text-anchor="middle" textLength="84.6" lengthAdjust="spacingAndGlyphs" transform="rotate(72 1236 650)" fill="none" stroke="#1f1f1f" stroke-width="2.2" stroke-linejoin="round">Holland Tunnel</text><text x="225" y="760.8" font-size="13.8" text-anchor="middle" textLength="41.5" lengthAdjust="spacingAndGlyphs" transform="rotate(-55 225 756)" fill="none" stroke="#1f1f1f" stroke-width="2.2" stroke-linejoin="round">67th St</text><text x="312" y="790.4" font-size="13.9" text-anchor="middle" textLength="41.9" lengthAdjust="spacingAndGlyphs" transform="rotate(-55 312 785.5)" fill="none" stroke="#1f1f1f" stroke-width="2.2" stroke-linejoin="round">59th St</text><text x="332" y="795.9" font-size="13.9" text-anchor="middle" textLength="42.0" lengthAdjust="spacingAndGlyphs" transform="rotate(-55 332 791)" fill="none" stroke="#1f1f1f" stroke-width="2.2" stroke-linejoin="round">57th St</text><text x="471" y="804.9" font-size="14.0" text-anchor="middle" textLength="52.9" lengthAdjust="spacingAndGlyphs" transform="rotate(22 471 800)" fill="none" stroke="#1f1f1f" stroke-width="2.2" stroke-linejoin="round">Park Ave</text><text x="241.8" y="820.7" font-size="14.0" text-anchor="middle" textLength="89.5" lengthAdjust="spacingAndGlyphs" transform="rotate(12 241.8 815.8)" fill="none" stroke="#1f1f1f" stroke-width="2.2" stroke-linejoin="round">Bergenline Ave</text><text x="306.5" y="844.0" font-size="14.1" text-anchor="middle" textLength="42.6" lengthAdjust="spacingAndGlyphs" transform="rotate(-55 306.5 839)" fill="none" stroke="#1f1f1f" stroke-width="2.2" stroke-linejoin="round">56th St</text><text x="524.6" y="871.8" font-size="14.3" text-anchor="middle" textLength="43.0" lengthAdjust="spacingAndGlyphs" transform="rotate(-57 524.6 866.8)" fill="none" stroke="#1f1f1f" stroke-width="2.2" stroke-linejoin="round">37th St</text><text x="557.9" y="875.5" font-size="14.3" text-anchor="middle" textLength="43.0" lengthAdjust="spacingAndGlyphs" transform="rotate(-57 557.9 870.5)" fill="none" stroke="#1f1f1f" stroke-width="2.2" stroke-linejoin="round">34th St</text><text x="476.5" y="908.8" font-size="14.4" text-anchor="middle" textLength="43.4" lengthAdjust="spacingAndGlyphs" transform="rotate(-55 476.5 903.8)" fill="none" stroke="#1f1f1f" stroke-width="2.2" stroke-linejoin="round">39th St</text><text x="310" y="927.1" font-size="14.5" text-anchor="middle" textLength="42.9" lengthAdjust="spacingAndGlyphs" transform="rotate(-55 310 922)" fill="none" stroke="#1f1f1f" stroke-width="2.2" stroke-linejoin="round">51st St</text><text x="557.9" y="936.6" font-size="14.5" text-anchor="middle" textLength="43.8" lengthAdjust="spacingAndGlyphs" transform="rotate(-57 557.9 931.5)" fill="none" stroke="#1f1f1f" stroke-width="2.2" stroke-linejoin="round">30th St</text><text x="611.5" y="931.1" font-size="14.5" text-anchor="middle" textLength="43.7" lengthAdjust="spacingAndGlyphs" transform="rotate(-60 611.5 926)" fill="none" stroke="#1f1f1f" stroke-width="2.2" stroke-linejoin="round">26th St</text><text x="631.8" y="940.1" font-size="14.6" text-anchor="middle" textLength="43.8" lengthAdjust="spacingAndGlyphs" transform="rotate(-60 631.8 935)" fill="none" stroke="#1f1f1f" stroke-width="2.2" stroke-linejoin="round">24th St</text><text x="668.8" y="944.0" font-size="14.6" text-anchor="middle" textLength="43.1" lengthAdjust="spacingAndGlyphs" transform="rotate(-62 668.8 938.9)" fill="none" stroke="#1f1f1f" stroke-width="2.2" stroke-linejoin="round">21st St</text><text x="730.5" y="960.6" font-size="14.6" text-anchor="middle" textLength="44.1" lengthAdjust="spacingAndGlyphs" transform="rotate(-67 730.5 955.5)" fill="none" stroke="#1f1f1f" stroke-width="2.2" stroke-linejoin="round">16th St</text><text x="757.5" y="960.6" font-size="14.6" text-anchor="middle" textLength="44.1" lengthAdjust="spacingAndGlyphs" transform="rotate(-67 757.5 955.5)" fill="none" stroke="#1f1f1f" stroke-width="2.2" stroke-linejoin="round">14th St</text><text x="752" y="1008.8" font-size="14.8" text-anchor="middle" textLength="44.7" lengthAdjust="spacingAndGlyphs" transform="rotate(-72 752 1003.6)" fill="none" stroke="#1f1f1f" stroke-width="2.2" stroke-linejoin="round">13th St</text><text x="783.4" y="973.6" font-size="14.7" text-anchor="middle" textLength="44.3" lengthAdjust="spacingAndGlyphs" transform="rotate(-67 783.4 968.5)" fill="none" stroke="#1f1f1f" stroke-width="2.2" stroke-linejoin="round">12th St</text><text x="806.7" y="977.1" font-size="14.7" text-anchor="middle" textLength="44.3" lengthAdjust="spacingAndGlyphs" transform="rotate(-70 806.7 972)" fill="none" stroke="#1f1f1f" stroke-width="2.2" stroke-linejoin="round">10th St</text><text x="829.6" y="973.6" font-size="14.7" text-anchor="middle" textLength="36.5" lengthAdjust="spacingAndGlyphs" transform="rotate(-72 829.6 968.5)" fill="none" stroke="#1f1f1f" stroke-width="2.2" stroke-linejoin="round">8th St</text><text x="236" y="971.7" font-size="14.7" text-anchor="middle" textLength="78.9" lengthAdjust="spacingAndGlyphs" transform="rotate(12 236 966.6)" fill="none" stroke="#1f1f1f" stroke-width="2.2" stroke-linejoin="round">Tonnelle Ave</text><text x="748.2" y="1105.0" font-size="15.3" text-anchor="middle" textLength="81.9" lengthAdjust="spacingAndGlyphs" transform="rotate(12 748.2 1099.7)" fill="none" stroke="#1f1f1f" stroke-width="2.2" stroke-linejoin="round">Tonnelle Ave</text><text x="950" y="1120.4" font-size="15.3" text-anchor="middle" textLength="89.5" lengthAdjust="spacingAndGlyphs" transform="rotate(12 950 1115)" fill="none" stroke="#1f1f1f" stroke-width="2.2" stroke-linejoin="round">Columbia Ave</text><text x="946" y="1145.4" font-size="15.4" text-anchor="middle" textLength="77.1" lengthAdjust="spacingAndGlyphs" transform="rotate(12 946 1140)" fill="none" stroke="#1f1f1f" stroke-width="2.2" stroke-linejoin="round">Terrace Ave</text><text x="968.5" y="828.9" font-size="14.1" text-anchor="middle" textLength="35.0" lengthAdjust="spacingAndGlyphs" transform="rotate(90 968.5 824)" fill="none" stroke="#1f1f1f" stroke-width="2.2" stroke-linejoin="round">9th St</text><text x="1136.7" y="836.6" font-size="14.1" text-anchor="middle" textLength="34.3" lengthAdjust="spacingAndGlyphs" transform="rotate(85 1136.7 831.7)" fill="none" stroke="#1f1f1f" stroke-width="2.2" stroke-linejoin="round">1st St</text><text x="1059" y="892.0" font-size="14.4" text-anchor="middle" textLength="35.6" lengthAdjust="spacingAndGlyphs" transform="rotate(85 1059 887)" fill="none" stroke="#1f1f1f" stroke-width="2.2" stroke-linejoin="round">5th St</text><text x="1122" y="892.0" font-size="14.4" text-anchor="middle" textLength="39.4" lengthAdjust="spacingAndGlyphs" transform="rotate(85 1122 887)" fill="none" stroke="#1f1f1f" stroke-width="2.2" stroke-linejoin="round">2nd St</text><text x="1253" y="912.6" font-size="14.4" text-anchor="middle" textLength="43.5" lengthAdjust="spacingAndGlyphs" transform="rotate(65 1253 907.5)" fill="none" stroke="#1f1f1f" stroke-width="2.2" stroke-linejoin="round">16th St</text><text x="1332.6" y="923.6" font-size="14.5" text-anchor="middle" textLength="43.6" lengthAdjust="spacingAndGlyphs" transform="rotate(65 1332.6 918.5)" fill="none" stroke="#1f1f1f" stroke-width="2.2" stroke-linejoin="round">10th St</text><text x="1378.9" y="910.7" font-size="14.4" text-anchor="middle" textLength="35.8" lengthAdjust="spacingAndGlyphs" transform="rotate(70 1378.9 905.6)" fill="none" stroke="#1f1f1f" stroke-width="2.2" stroke-linejoin="round">7th St</text><text x="1628.4" y="832.9" font-size="14.1" text-anchor="middle" textLength="94.6" lengthAdjust="spacingAndGlyphs" transform="rotate(62 1628.4 828)" fill="none" stroke="#1f1f1f" stroke-width="2.2" stroke-linejoin="round">Audrey Zapp Dr</text><text x="1153.3" y="975.4" font-size="14.7" text-anchor="middle" textLength="80.5" lengthAdjust="spacingAndGlyphs" transform="rotate(10 1153.3 970.3)" fill="none" stroke="#1f1f1f" stroke-width="2.2" stroke-linejoin="round">Palisade Ave</text><text x="1085" y="1073.6" font-size="15.1" text-anchor="middle" textLength="76.4" lengthAdjust="spacingAndGlyphs" transform="rotate(12 1085 1068.3)" fill="none" stroke="#1f1f1f" stroke-width="2.2" stroke-linejoin="round">Summit Ave</text><text x="1454.6" y="1105.0" font-size="15.3" text-anchor="middle" textLength="78.7" lengthAdjust="spacingAndGlyphs" transform="rotate(15 1454.6 1099.7)" fill="none" stroke="#1f1f1f" stroke-width="2.2" stroke-linejoin="round">Baldwin Ave</text><text x="1148" y="594.6" font-size="13.1" text-anchor="middle" textLength="29.0" lengthAdjust="spacingAndGlyphs" transform="rotate(-3 1148 590)" fill="none" stroke="#1f1f1f" stroke-width="2.2" stroke-linejoin="round">on St</text><text x="232" y="338.9" font-size="14.5" textLength="52.4" lengthAdjust="spacingAndGlyphs" letter-spacing="1.6" fill="#a9a9a9">HARLEM</text><text x="262.3" y="412" font-size="12.8" textLength="93.2" lengthAdjust="spacingAndGlyphs" letter-spacing="1.6" fill="#a9a9a9">MANHATTAN</text><text x="479" y="401.8" font-size="12.1" textLength="45.5" lengthAdjust="spacingAndGlyphs" letter-spacing="1.6" fill="#a9a9a9">UPPER</text><text x="467" y="417.6" font-size="13.2" textLength="69.0" lengthAdjust="spacingAndGlyphs" letter-spacing="1.6" fill="#a9a9a9">EAST SIDE</text><text x="558" y="367" font-size="14.5" textLength="77.0" lengthAdjust="spacingAndGlyphs" letter-spacing="1.6" fill="#a9a9a9">LENOX HILL</text><text x="784" y="400" font-size="14.5" textLength="78.6" lengthAdjust="spacingAndGlyphs" letter-spacing="1.6" fill="#a9a9a9">TUDOR CITY</text><text x="813.7" y="432" font-size="15.1" textLength="56.0" lengthAdjust="spacingAndGlyphs" letter-spacing="1.6" fill="#a9a9a9">MURRAY</text><text x="826.5" y="448" font-size="13.8" textLength="29.5" lengthAdjust="spacingAndGlyphs" letter-spacing="1.6" fill="#a9a9a9">HILL</text><text x="731" y="482" font-size="14.3" textLength="65.0" lengthAdjust="spacingAndGlyphs" letter-spacing="1.6" fill="#a9a9a9">MIDTOWN</text><text x="720" y="498.5" font-size="15.1" textLength="86.7" lengthAdjust="spacingAndGlyphs" letter-spacing="1.6" fill="#a9a9a9">MANHATTAN</text><text x="819.4" y="485" font-size="15.1" textLength="85.6" lengthAdjust="spacingAndGlyphs" letter-spacing="1.6" fill="#a9a9a9">KOREATOWN</text><text x="877.5" y="582" font-size="15.6" textLength="64.5" lengthAdjust="spacingAndGlyphs" letter-spacing="1.6" fill="#a9a9a9">CHELSEA</text><text x="1345.6" y="343.6" font-size="14.6" textLength="72.1" lengthAdjust="spacingAndGlyphs" letter-spacing="1.6" fill="#a9a9a9">NAVY YARD</text><text x="1224" y="415.7" font-size="13.8" textLength="46.6" lengthAdjust="spacingAndGlyphs" letter-spacing="1.6" fill="#a9a9a9">LOWER</text><text x="1212.4" y="431.7" font-size="14.7" textLength="69.6" lengthAdjust="spacingAndGlyphs" letter-spacing="1.6" fill="#a9a9a9">EAST SIDE</text><text x="1075" y="444" font-size="14.5" textLength="34.0" lengthAdjust="spacingAndGlyphs" letter-spacing="1.6" fill="#a9a9a9">EAST</text><text x="1063.5" y="460" font-size="14.3" textLength="56.5" lengthAdjust="spacingAndGlyphs" letter-spacing="1.6" fill="#a9a9a9">VILLAGE</text><text x="1234.5" y="480" font-size="15.1" textLength="83.2" lengthAdjust="spacingAndGlyphs" letter-spacing="1.6" fill="#a9a9a9">CHINATOWN</text><text x="1383.8" y="417.5" font-size="14.7" textLength="49.9" lengthAdjust="spacingAndGlyphs" letter-spacing="1.6" fill="#a9a9a9">DUMBO</text><text x="1623" y="366.4" font-size="14.7" textLength="64.0" lengthAdjust="spacingAndGlyphs" letter-spacing="1.6" fill="#a9a9a9">GOWANUS</text><text x="1590.8" y="425" font-size="14.3" textLength="54.6" lengthAdjust="spacingAndGlyphs" letter-spacing="1.6" fill="#a9a9a9">COBBLE</text><text x="1603" y="440.7" font-size="13.8" textLength="29.6" lengthAdjust="spacingAndGlyphs" letter-spacing="1.6" fill="#a9a9a9">HILL</text><text x="1044.6" y="506.7" font-size="14.7" textLength="83.9" lengthAdjust="spacingAndGlyphs" letter-spacing="1.6" fill="#a9a9a9">GREENWICH</text><text x="1057.8" y="522.8" font-size="14.9" textLength="57.2" lengthAdjust="spacingAndGlyphs" letter-spacing="1.6" fill="#a9a9a9">VILLAGE</text><text x="1189" y="509.2" font-size="14.7" textLength="37.7" lengthAdjust="spacingAndGlyphs" letter-spacing="1.6" fill="#a9a9a9">SOHO</text><text x="1407" y="598.5" font-size="14.7" textLength="63.0" lengthAdjust="spacingAndGlyphs" letter-spacing="1.6" fill="#a9a9a9">BATTERY</text><text x="1401.6" y="614.5" font-size="14.7" textLength="73.9" lengthAdjust="spacingAndGlyphs" letter-spacing="1.6" fill="#a9a9a9">PARK CITY</text><text x="710.5" y="787" font-size="15.1" textLength="39.5" lengthAdjust="spacingAndGlyphs" letter-spacing="1.6" fill="#a9a9a9">LINC</text><text x="711" y="804" font-size="15.1" textLength="41.0" lengthAdjust="spacingAndGlyphs" letter-spacing="1.6" fill="#a9a9a9">HARB</text><text x="728" y="866" font-size="16.8" textLength="98.6" lengthAdjust="spacingAndGlyphs" letter-spacing="1.6" fill="#a9a9a9">THE SHADES</text><text x="1470.5" y="751" font-size="15.1" textLength="69.2" lengthAdjust="spacingAndGlyphs" letter-spacing="1.6" fill="#a9a9a9">COLGATE</text><text x="1473" y="768.8" font-size="15.3" textLength="63.0" lengthAdjust="spacingAndGlyphs" letter-spacing="1.6" fill="#a9a9a9">CENTER</text><text x="1695" y="338" font-size="15.1" textLength="34.0" lengthAdjust="spacingAndGlyphs" letter-spacing="1.6" fill="#a9a9a9">PARK</text><text x="1305.3" y="538.6" font-size="30.0" textLength="116.9" lengthAdjust="spacingAndGlyphs" fill="#ebebeb">New York</text><text x="260" y="752.6" font-size="22.6" textLength="143.8" lengthAdjust="spacingAndGlyphs" fill="#ebebeb">West New York</text><text x="374.9" y="872.9" font-size="25.2" textLength="107.0" lengthAdjust="spacingAndGlyphs" fill="#ebebeb">Union City</text><text x="1001" y="837.2" font-size="26.8" textLength="91.3" lengthAdjust="spacingAndGlyphs" fill="#ebebeb">Hoboken</text><text x="1401" y="916" font-size="25.4" textLength="127.6" lengthAdjust="spacingAndGlyphs" fill="#ebebeb">Jersey City</text><text x="195" y="722.3" font-size="22.2" textLength="88.0" lengthAdjust="spacingAndGlyphs" fill="#ebebeb">uttenberg</text><text x="540.5" y="805.5" font-size="23.9" textLength="117.5" lengthAdjust="spacingAndGlyphs" fill="#ebebeb">Weehawken</text><text x="1711.6" y="1021" font-size="19.4" textLength="28.4" lengthAdjust="spacingAndGlyphs" fill="#ebebeb">Co</text><text x="388" y="366.8" font-size="12.1" text-anchor="middle" textLength="50.6" lengthAdjust="spacingAndGlyphs" transform="rotate(-45 388 362.6)" fill="#bababa">E 92nd St</text><text x="501" y="361.0" font-size="12.1" text-anchor="middle" textLength="47.3" lengthAdjust="spacingAndGlyphs" transform="rotate(-50 501 356.8)" fill="#bababa">E 80th St</text><text x="532.6" y="364.5" font-size="12.1" text-anchor="middle" textLength="47.4" lengthAdjust="spacingAndGlyphs" transform="rotate(-50 532.6 360.3)" fill="#bababa">E 76th St</text><text x="240" y="470.8" font-size="12.6" text-anchor="middle" textLength="52.4" lengthAdjust="spacingAndGlyphs" transform="rotate(-42 240 466.4)" fill="#bababa">W 97th St</text><text x="277.4" y="482.4" font-size="12.6" text-anchor="middle" textLength="56.0" lengthAdjust="spacingAndGlyphs" transform="rotate(-43 277.4 478)" fill="#bababa">W 92nd St</text><text x="316" y="494.1" font-size="12.7" text-anchor="middle" textLength="52.8" lengthAdjust="spacingAndGlyphs" transform="rotate(-45 316 489.7)" fill="#bababa">W 87th St</text><text x="353" y="498.4" font-size="12.7" text-anchor="middle" textLength="53.6" lengthAdjust="spacingAndGlyphs" transform="rotate(-46 353 494)" fill="#bababa">W 83rd St</text><text x="473" y="512.8" font-size="12.7" text-anchor="middle" textLength="53.2" lengthAdjust="spacingAndGlyphs" transform="rotate(-48 473 508.3)" fill="#bababa">W 70th St</text><text x="620" y="403.3" font-size="12.3" text-anchor="middle" textLength="48.6" lengthAdjust="spacingAndGlyphs" transform="rotate(-55 620 399)" fill="#bababa">E 63rd St</text><text x="692.7" y="390.9" font-size="12.2" text-anchor="middle" textLength="47.8" lengthAdjust="spacingAndGlyphs" transform="rotate(-57 692.7 386.6)" fill="#bababa">E 56th St</text><text x="756.4" y="419.3" font-size="12.3" text-anchor="middle" textLength="48.3" lengthAdjust="spacingAndGlyphs" transform="rotate(-58 756.4 415)" fill="#bababa">E 47th St</text><text x="612" y="511.5" font-size="12.7" text-anchor="middle" textLength="53.1" lengthAdjust="spacingAndGlyphs" transform="rotate(-55 612 507)" fill="#bababa">W 56th St</text><text x="643" y="523.9" font-size="12.8" text-anchor="middle" textLength="56.7" lengthAdjust="spacingAndGlyphs" transform="rotate(-55 643 519.4)" fill="#bababa">W 52nd St</text><text x="669.7" y="564.5" font-size="13.0" text-anchor="middle" textLength="54.1" lengthAdjust="spacingAndGlyphs" transform="rotate(-57 669.7 560)" fill="#bababa">W 47th St</text><text x="872.5" y="523.9" font-size="12.8" text-anchor="middle" textLength="53.4" lengthAdjust="spacingAndGlyphs" transform="rotate(-62 872.5 519.4)" fill="#bababa">W 29th St</text><text x="809.5" y="571.5" font-size="13.0" text-anchor="middle" textLength="39.8" lengthAdjust="spacingAndGlyphs" transform="rotate(-62 809.5 567)" fill="#bababa">33rd St</text><text x="694.5" y="516.8" font-size="12.8" text-anchor="middle" textLength="40.2" lengthAdjust="spacingAndGlyphs" transform="rotate(17 694.5 512.3)" fill="#bababa">8th Ave</text><text x="915" y="556.8" font-size="12.9" text-anchor="middle" textLength="40.8" lengthAdjust="spacingAndGlyphs" transform="rotate(15 915 552.3)" fill="#bababa">8th Ave</text><text x="664.4" y="609.0" font-size="13.2" text-anchor="middle" textLength="48.4" lengthAdjust="spacingAndGlyphs" transform="rotate(18 664.4 604.4)" fill="#bababa">12th Ave</text><text x="687.4" y="702.7" font-size="13.5" text-anchor="middle" textLength="83.0" lengthAdjust="spacingAndGlyphs" transform="rotate(-62 687.4 698)" fill="#bababa">Lincoln Tunnel</text><text x="1153.5" y="366.2" font-size="12.1" text-anchor="middle" textLength="39.0" lengthAdjust="spacingAndGlyphs" transform="rotate(-3 1153.5 362)" fill="#bababa">FDR Dr</text><text x="1090" y="418.9" font-size="12.3" text-anchor="middle" textLength="30.4" lengthAdjust="spacingAndGlyphs" transform="rotate(8 1090 414.6)" fill="#bababa">Ave A</text><text x="1125" y="402.1" font-size="12.3" text-anchor="middle" textLength="41.5" lengthAdjust="spacingAndGlyphs" transform="rotate(-65 1125 397.8)" fill="#bababa">E 7th St</text><text x="1151.7" y="434.3" font-size="12.4" text-anchor="middle" textLength="42.6" lengthAdjust="spacingAndGlyphs" transform="rotate(-70 1151.7 430)" fill="#bababa">E 3rd St</text><text x="971.4" y="452.2" font-size="12.5" text-anchor="middle" textLength="52.1" lengthAdjust="spacingAndGlyphs" transform="rotate(-65 971.4 447.8)" fill="#bababa">E 22nd St</text><text x="1014" y="454.0" font-size="12.5" text-anchor="middle" textLength="48.8" lengthAdjust="spacingAndGlyphs" transform="rotate(-67 1014 449.6)" fill="#bababa">E 17th St</text><text x="1574.8" y="371.8" font-size="12.1" text-anchor="middle" textLength="41.7" lengthAdjust="spacingAndGlyphs" transform="rotate(80 1574.8 367.5)" fill="#bababa">Dean St</text><text x="1560.5" y="414.3" font-size="12.3" text-anchor="middle" textLength="41.7" lengthAdjust="spacingAndGlyphs" transform="rotate(75 1560.5 410)" fill="#bababa">State St</text><text x="1689" y="411.8" font-size="12.3" text-anchor="middle" textLength="42.9" lengthAdjust="spacingAndGlyphs" transform="rotate(5 1689 407.5)" fill="#bababa">Court St</text><text x="1676.5" y="434.3" font-size="12.4" text-anchor="middle" textLength="45.9" lengthAdjust="spacingAndGlyphs" transform="rotate(5 1676.5 430)" fill="#bababa">Henry St</text><text x="1489" y="431.3" font-size="12.4" text-anchor="middle" textLength="43.2" lengthAdjust="spacingAndGlyphs" transform="rotate(5 1489 427)" fill="#bababa">Hicks St</text><text x="1350" y="450.4" font-size="12.5" text-anchor="middle" textLength="40.2" lengthAdjust="spacingAndGlyphs" transform="rotate(50 1350 446)" fill="#bababa">FDR Dr</text><text x="973.2" y="541.5" font-size="12.9" text-anchor="middle" textLength="53.7" lengthAdjust="spacingAndGlyphs" transform="rotate(-70 973.2 537)" fill="#bababa">W 18th St</text><text x="1619.4" y="539.8" font-size="12.9" text-anchor="middle" textLength="78.8" lengthAdjust="spacingAndGlyphs" transform="rotate(-28 1619.4 535.3)" fill="#bababa">Battery Tunnel</text><text x="1236" y="654.7" font-size="13.3" text-anchor="middle" textLength="84.6" lengthAdjust="spacingAndGlyphs" transform="rotate(72 1236 650)" fill="#bababa">Holland Tunnel</text><text x="225" y="760.8" font-size="13.8" text-anchor="middle" textLength="41.5" lengthAdjust="spacingAndGlyphs" transform="rotate(-55 225 756)" fill="#bababa">67th St</text><text x="312" y="790.4" font-size="13.9" text-anchor="middle" textLength="41.9" lengthAdjust="spacingAndGlyphs" transform="rotate(-55 312 785.5)" fill="#bababa">59th St</text><text x="332" y="795.9" font-size="13.9" text-anchor="middle" textLength="42.0" lengthAdjust="spacingAndGlyphs" transform="rotate(-55 332 791)" fill="#bababa">57th St</text><text x="471" y="804.9" font-size="14.0" text-anchor="middle" textLength="52.9" lengthAdjust="spacingAndGlyphs" transform="rotate(22 471 800)" fill="#bababa">Park Ave</text><text x="241.8" y="820.7" font-size="14.0" text-anchor="middle" textLength="89.5" lengthAdjust="spacingAndGlyphs" transform="rotate(12 241.8 815.8)" fill="#bababa">Bergenline Ave</text><text x="306.5" y="844.0" font-size="14.1" text-anchor="middle" textLength="42.6" lengthAdjust="spacingAndGlyphs" transform="rotate(-55 306.5 839)" fill="#bababa">56th St</text><text x="524.6" y="871.8" font-size="14.3" text-anchor="middle" textLength="43.0" lengthAdjust="spacingAndGlyphs" transform="rotate(-57 524.6 866.8)" fill="#bababa">37th St</text><text x="557.9" y="875.5" font-size="14.3" text-anchor="middle" textLength="43.0" lengthAdjust="spacingAndGlyphs" transform="rotate(-57 557.9 870.5)" fill="#bababa">34th St</text><text x="476.5" y="908.8" font-size="14.4" text-anchor="middle" textLength="43.4" lengthAdjust="spacingAndGlyphs" transform="rotate(-55 476.5 903.8)" fill="#bababa">39th St</text><text x="310" y="927.1" font-size="14.5" text-anchor="middle" textLength="42.9" lengthAdjust="spacingAndGlyphs" transform="rotate(-55 310 922)" fill="#bababa">51st St</text><text x="557.9" y="936.6" font-size="14.5" text-anchor="middle" textLength="43.8" lengthAdjust="spacingAndGlyphs" transform="rotate(-57 557.9 931.5)" fill="#bababa">30th St</text><text x="611.5" y="931.1" font-size="14.5" text-anchor="middle" textLength="43.7" lengthAdjust="spacingAndGlyphs" transform="rotate(-60 611.5 926)" fill="#bababa">26th St</text><text x="631.8" y="940.1" font-size="14.6" text-anchor="middle" textLength="43.8" lengthAdjust="spacingAndGlyphs" transform="rotate(-60 631.8 935)" fill="#bababa">24th St</text><text x="668.8" y="944.0" font-size="14.6" text-anchor="middle" textLength="43.1" lengthAdjust="spacingAndGlyphs" transform="rotate(-62 668.8 938.9)" fill="#bababa">21st St</text><text x="730.5" y="960.6" font-size="14.6" text-anchor="middle" textLength="44.1" lengthAdjust="spacingAndGlyphs" transform="rotate(-67 730.5 955.5)" fill="#bababa">16th St</text><text x="757.5" y="960.6" font-size="14.6" text-anchor="middle" textLength="44.1" lengthAdjust="spacingAndGlyphs" transform="rotate(-67 757.5 955.5)" fill="#bababa">14th St</text><text x="752" y="1008.8" font-size="14.8" text-anchor="middle" textLength="44.7" lengthAdjust="spacingAndGlyphs" transform="rotate(-72 752 1003.6)" fill="#bababa">13th St</text><text x="783.4" y="973.6" font-size="14.7" text-anchor="middle" textLength="44.3" lengthAdjust="spacingAndGlyphs" transform="rotate(-67 783.4 968.5)" fill="#bababa">12th St</text><text x="806.7" y="977.1" font-size="14.7" text-anchor="middle" textLength="44.3" lengthAdjust="spacingAndGlyphs" transform="rotate(-70 806.7 972)" fill="#bababa">10th St</text><text x="829.6" y="973.6" font-size="14.7" text-anchor="middle" textLength="36.5" lengthAdjust="spacingAndGlyphs" transform="rotate(-72 829.6 968.5)" fill="#bababa">8th St</text><text x="236" y="971.7" font-size="14.7" text-anchor="middle" textLength="78.9" lengthAdjust="spacingAndGlyphs" transform="rotate(12 236 966.6)" fill="#bababa">Tonnelle Ave</text><text x="748.2" y="1105.0" font-size="15.3" text-anchor="middle" textLength="81.9" lengthAdjust="spacingAndGlyphs" transform="rotate(12 748.2 1099.7)" fill="#bababa">Tonnelle Ave</text><text x="950" y="1120.4" font-size="15.3" text-anchor="middle" textLength="89.5" lengthAdjust="spacingAndGlyphs" transform="rotate(12 950 1115)" fill="#bababa">Columbia Ave</text><text x="946" y="1145.4" font-size="15.4" text-anchor="middle" textLength="77.1" lengthAdjust="spacingAndGlyphs" transform="rotate(12 946 1140)" fill="#bababa">Terrace Ave</text><text x="968.5" y="828.9" font-size="14.1" text-anchor="middle" textLength="35.0" lengthAdjust="spacingAndGlyphs" transform="rotate(90 968.5 824)" fill="#bababa">9th St</text><text x="1136.7" y="836.6" font-size="14.1" text-anchor="middle" textLength="34.3" lengthAdjust="spacingAndGlyphs" transform="rotate(85 1136.7 831.7)" fill="#bababa">1st St</text><text x="1059" y="892.0" font-size="14.4" text-anchor="middle" textLength="35.6" lengthAdjust="spacingAndGlyphs" transform="rotate(85 1059 887)" fill="#bababa">5th St</text><text x="1122" y="892.0" font-size="14.4" text-anchor="middle" textLength="39.4" lengthAdjust="spacingAndGlyphs" transform="rotate(85 1122 887)" fill="#bababa">2nd St</text><text x="1253" y="912.6" font-size="14.4" text-anchor="middle" textLength="43.5" lengthAdjust="spacingAndGlyphs" transform="rotate(65 1253 907.5)" fill="#bababa">16th St</text><text x="1332.6" y="923.6" font-size="14.5" text-anchor="middle" textLength="43.6" lengthAdjust="spacingAndGlyphs" transform="rotate(65 1332.6 918.5)" fill="#bababa">10th St</text><text x="1378.9" y="910.7" font-size="14.4" text-anchor="middle" textLength="35.8" lengthAdjust="spacingAndGlyphs" transform="rotate(70 1378.9 905.6)" fill="#bababa">7th St</text><text x="1628.4" y="832.9" font-size="14.1" text-anchor="middle" textLength="94.6" lengthAdjust="spacingAndGlyphs" transform="rotate(62 1628.4 828)" fill="#bababa">Audrey Zapp Dr</text><text x="1153.3" y="975.4" font-size="14.7" text-anchor="middle" textLength="80.5" lengthAdjust="spacingAndGlyphs" transform="rotate(10 1153.3 970.3)" fill="#bababa">Palisade Ave</text><text x="1085" y="1073.6" font-size="15.1" text-anchor="middle" textLength="76.4" lengthAdjust="spacingAndGlyphs" transform="rotate(12 1085 1068.3)" fill="#bababa">Summit Ave</text><text x="1454.6" y="1105.0" font-size="15.3" text-anchor="middle" textLength="78.7" lengthAdjust="spacingAndGlyphs" transform="rotate(15 1454.6 1099.7)" fill="#bababa">Baldwin Ave</text><text x="1148" y="594.6" font-size="13.1" text-anchor="middle" textLength="29.0" lengthAdjust="spacingAndGlyphs" transform="rotate(-3 1148 590)" fill="#bababa">on St</text></g>
<circle cx="743.3" cy="581.5" r="12.2" fill="#fafad2" stroke="#1a1414" stroke-width="1.2"/><circle cx="1218.7" cy="564.2" r="11.7" fill="#d93a4f" stroke="#1a1414" stroke-width="1.2"/><circle cx="1269.7" cy="776.8" r="13.9" fill="#d93a4f" stroke="#1a1414" stroke-width="1.2"/><circle cx="524" cy="987.5" r="15" fill="#d93a4f" stroke="#1a1414" stroke-width="1.2"/><circle cx="610" cy="835.3" r="14.3" fill="#d93a4f" stroke="#1a1414" stroke-width="1.2"/><circle cx="638.5" cy="770.6" r="14" fill="#118a66" stroke="#1a1414" stroke-width="1.2"/><circle cx="649.4" cy="799" r="13" fill="#eb9e5c" stroke="#1a1414" stroke-width="1.2"/><circle cx="631.3" cy="800" r="13.5" fill="#d7374c" stroke="#1a1414" stroke-width="1.2"/><circle cx="1308" cy="913.3" r="14" fill="#d93a4f" stroke="#1a1414" stroke-width="1.2"/><circle cx="1280.5" cy="915.4" r="14.5" fill="#d93a4f" stroke="#1a1414" stroke-width="1.2"/></svg>
<!-- /MAP -->


<!-- TOOLTIP -->
<div class="a" style="left:746px;top:584px;width:391px;height:225px;background:#000"></div>
<div class="a" style="left:758px;top:597px;font-size:16px;line-height:18.25px;color:#fff;white-space:nowrap">
<div style="color:#3cb464;font-weight:bold;letter-spacing:-0.15px">LT NY Expressway 39th St. Between 9th and 10th</div>
<div><b>Coordinates</b>:-74.00,40.76</div>
<div><b>As of (ET)</b>: 2023-01-25 16:24:49</div>
<div>&nbsp;</div>
<div><b># of Vehicles</b>: 23</div>
<div><b>Cars</b>: 13.04%</div>
<div><b>Buses</b>: 86.96%</div>
<div><b>Trucks</b>: 0.00%</div>
<div><b>Motorbikes</b>: 0%</div>
<div><b>Bicycles</b>: 0%</div>
<div><b>People</b>: 0%</div>
</div>
<!-- MAPBOX -->
<svg class="a" style="left:195px;top:1100px" width="1539" height="58" viewBox="195 1100 1539 58">
<circle cx="216" cy="1135" r="11.6" fill="#ececec"/>
<path d="M209.5 1142 L209.5 1135 A6.8 6.8 0 1 1 216.3 1141.8 Z" fill="#2a2a2a"/>
<path d="M216.5 1130.5 L217.6 1133.6 L220.7 1134.7 L217.6 1135.8 L216.5 1138.9 L215.4 1135.8 L212.3 1134.7 L215.4 1133.6 Z" fill="#ececec"/>
<text x="233" y="1141" font-family="Liberation Sans" font-weight="bold" font-size="21" fill="#ececec" textLength="75" lengthAdjust="spacingAndGlyphs">mapbox</text>
<rect x="1391" y="1131.5" width="342" height="23.5" fill="#b8b8b8" fill-opacity="0.72"/>
<text x="1397" y="1149" font-family="Liberation Sans" font-size="16" fill="#43a5e2" textLength="197" lengthAdjust="spacingAndGlyphs">&#169; Mapbox &#169; OpenStreetMap</text>
<text x="1603" y="1149" font-family="Liberation Sans" font-weight="bold" font-size="16" fill="#43a5e2" textLength="122" lengthAdjust="spacingAndGlyphs">Improve this map</text>
<rect x="195" y="1156" width="1539" height="2" fill="#000"/>
</svg>
<svg class="a" style="left:186px;top:756px" width="7" height="50" viewBox="0 0 7 50"><rect width="7" height="50" fill="#484848"/><path d="M1.5 20 L5 25 L1.5 30" stroke="#5e5e5e" stroke-width="1.2" fill="none"/></svg>

<!-- sidebar -->
<div class="t" style="left:1756px;top:64px;font-size:18px;color:#fff;font-weight:bold;letter-spacing:-0.9px">Filters</div>
<svg class="a" style="left:1960px;top:64px" width="20" height="20" viewBox="0 0 20 20"><path d="M3.5 6.5 A7.5 7.5 0 1 1 2.5 10.5" fill="none" stroke="#888" stroke-width="1.3"/><path d="M2.5 3 V7.5 H7" fill="none" stroke="#888" stroke-width="1.3"/></svg>
<div class="a" style="left:2003px;top:66px;width:4px;height:4px;background:#fff;border-radius:1px"></div>
<div class="a" style="left:2003px;top:73px;width:4px;height:4px;background:#fff;border-radius:1px"></div>
<div class="a" style="left:2003px;top:80px;width:4px;height:4px;background:#fff;border-radius:1px"></div>
<div class="a" style="left:1746px;top:103px;width:278px;height:2px;background:#ccc"></div>


<!-- box 1 -->
<div class="box" style="top:112px;height:130px"></div>
<div class="hl" style="top:147px"></div>
<div class="hl" style="top:208px"></div>
<svg class="a" style="left:1763px;top:123px" width="10" height="14" viewBox="0 0 10 14"><path d="M3 3 L7 7 L3 11" fill="none" stroke="#ccc" stroke-width="1.2"/></svg>
<div class="t" style="left:1782px;top:121px;font-size:16.5px;color:#fff">Historical Date Range</div>
<div class="inc" style="top:164px">Include all</div>
<div class="tog" style="top:220px"></div><div class="knob" style="left:1998px;top:218px"></div>
<!-- box 2 -->
<div class="box" style="top:250px;height:129px"></div>
<div class="hl" style="top:284px"></div>
<div class="hl" style="top:345px"></div>
<svg class="a" style="left:1763px;top:261px" width="10" height="14" viewBox="0 0 10 14"><path d="M3 3 L7 7 L3 11" fill="none" stroke="#ccc" stroke-width="1.2"/></svg>
<div class="t" style="left:1782px;top:259px;font-size:16.5px;color:#fff">Intersection</div>
<div class="inc" style="top:301px">Include all</div>
<div class="tog" style="top:357px"></div><div class="knob" style="left:1998px;top:355px"></div>
<!-- box 3 -->
<div class="box" style="top:387px;height:457px"></div>
<div class="t" style="left:1766px;top:396px;font-size:16.5px;color:#fff">Object Type</div>
<div class="inc" style="top:437px">Include all</div>
<div class="hl" style="top:480px"></div>
<svg class="a" style="left:1800px;top:481px" width="170" height="20" viewBox="0 0 170 20"><path d="M2 0 H168 L84 19 Z" fill="#6e6e6e"/></svg>
<div class="t" style="left:1766px;top:506px;font-size:16.5px;color:#fff">Approaches</div>
<div class="inc" style="top:546px">Include all</div>
<div class="hl" style="top:590px"></div>
<svg class="a" style="left:1800px;top:591px" width="170" height="20" viewBox="0 0 170 20"><path d="M2 0 H168 L84 19 Z" fill="#6e6e6e"/></svg>
<div class="t" style="left:1766px;top:615px;font-size:16.5px;color:#fff">Movement</div>
<div class="inc" style="top:656px">Include all</div>
<div class="hl" style="top:700px"></div>
<svg class="a" style="left:1800px;top:701px" width="170" height="20" viewBox="0 0 170 20"><path d="M2 0 H168 L84 19 Z" fill="#6e6e6e"/></svg>
<div class="t" style="left:1766px;top:725px;font-size:16.5px;color:#fff">Arrival Phase</div>
<div class="inc" style="top:766px">Include all</div>
<div class="hl" style="top:809px"></div>
<div class="tog" style="top:822px"></div><div class="knob" style="left:1998px;top:820px"></div>
<svg class="a" style="left:1736px;top:757px" width="10" height="50" viewBox="0 0 10 50"><rect width="10" height="50" fill="#4a4a4a"/><path d="M2.5 20 L6.5 25 L2.5 30" stroke="#666" stroke-width="1.2" fill="none"/></svg>
</body></html>
